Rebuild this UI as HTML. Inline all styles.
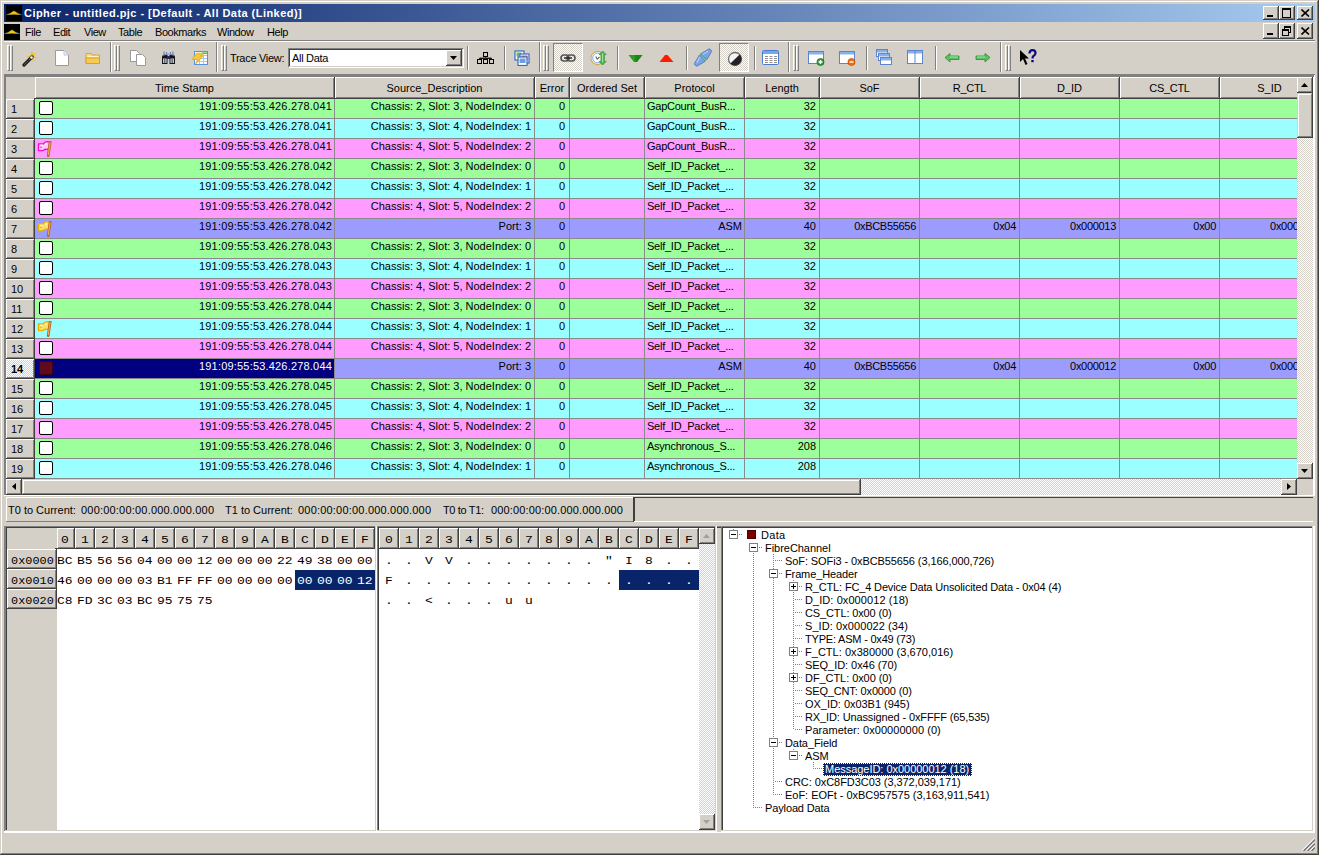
<!DOCTYPE html><html><head><meta charset="utf-8"><style>
html,body{margin:0;padding:0;}
body{width:1319px;height:855px;position:relative;overflow:hidden;background:#d4d0c8;font-family:"Liberation Sans",sans-serif;font-size:11px;color:#000;}
div,svg{position:absolute;}
.t{white-space:nowrap;line-height:13px;}
.m{white-space:nowrap;line-height:13px;font-family:"Liberation Mono",monospace;font-size:11px;transform:scaleX(1.18);transform-origin:0 0;}
.mc{transform-origin:50% 0;}
</style></head><body>
<div style="left:1px;top:1px;width:1316px;height:1px;background:#ffffff;"></div>
<div style="left:1px;top:1px;width:1px;height:852px;background:#ffffff;"></div>
<div style="left:0px;top:854px;width:1319px;height:1px;background:#404040;"></div>
<div style="left:1318px;top:0px;width:1px;height:855px;background:#404040;"></div>
<div style="left:1px;top:853px;width:1317px;height:1px;background:#808080;"></div>
<div style="left:1317px;top:1px;width:1px;height:853px;background:#808080;"></div>
<div style="left:4px;top:4px;width:1311px;height:18px;background:linear-gradient(to right,#0a246a,#a6caf0);"></div>
<svg style="left:6px;top:5px" width="16" height="16"><rect width="16" height="16" fill="#000"/><path d="M0 10 Q4 8.8 6.5 6.8 Q8 5.2 9.5 6.8 Q12 8.8 16 10 Q12 9.6 8 9.6 Q4 9.6 0 10 Z" fill="#f0c410"/><path d="M0.5 9.8 Q3 9 4.5 8.3 M15.5 9.8 Q13 9 11.5 8.3" stroke="#3a70a0" stroke-width="0.9" fill="none"/><path d="M6.5 6.8 Q8 5.2 9.5 6.8" stroke="#90a020" stroke-width="0.6" fill="none"/></svg>
<div class="t" style="left:24px;top:7px;color:#fff;font-weight:bold;letter-spacing:0.46px;">Cipher - untitled.pjc - [Default - All Data (Linked)]</div>
<div style="left:1263px;top:6px;width:16px;height:14px;background:#d4d0c8;"></div>
<div style="left:1263px;top:6px;width:15px;height:1px;background:#ffffff;"></div>
<div style="left:1263px;top:6px;width:1px;height:13px;background:#ffffff;"></div>
<div style="left:1263px;top:19px;width:16px;height:1px;background:#404040;"></div>
<div style="left:1278px;top:6px;width:1px;height:14px;background:#404040;"></div>
<div style="left:1264px;top:18px;width:14px;height:1px;background:#808080;"></div>
<div style="left:1277px;top:7px;width:1px;height:12px;background:#808080;"></div>
<div style="left:1267px;top:15px;width:6px;height:2px;background:#000;"></div>
<div style="left:1279px;top:6px;width:16px;height:14px;background:#d4d0c8;"></div>
<div style="left:1279px;top:6px;width:15px;height:1px;background:#ffffff;"></div>
<div style="left:1279px;top:6px;width:1px;height:13px;background:#ffffff;"></div>
<div style="left:1279px;top:19px;width:16px;height:1px;background:#404040;"></div>
<div style="left:1294px;top:6px;width:1px;height:14px;background:#404040;"></div>
<div style="left:1280px;top:18px;width:14px;height:1px;background:#808080;"></div>
<div style="left:1293px;top:7px;width:1px;height:12px;background:#808080;"></div>
<div style="left:1282px;top:8px;width:7px;height:7px;border:1px solid #000;border-top-width:2px"></div>
<div style="left:1297px;top:6px;width:16px;height:14px;background:#d4d0c8;"></div>
<div style="left:1297px;top:6px;width:15px;height:1px;background:#ffffff;"></div>
<div style="left:1297px;top:6px;width:1px;height:13px;background:#ffffff;"></div>
<div style="left:1297px;top:19px;width:16px;height:1px;background:#404040;"></div>
<div style="left:1312px;top:6px;width:1px;height:14px;background:#404040;"></div>
<div style="left:1298px;top:18px;width:14px;height:1px;background:#808080;"></div>
<div style="left:1311px;top:7px;width:1px;height:12px;background:#808080;"></div>
<svg style="left:1301px;top:9px" width="9" height="8"><path d="M0.5 0.5 L8 7.5 M8 0.5 L0.5 7.5" stroke="#000" stroke-width="1.6"/></svg>
<svg style="left:4px;top:24px" width="16" height="16"><rect width="16" height="16" fill="#000"/><path d="M0 10 Q4 8.8 6.5 6.8 Q8 5.2 9.5 6.8 Q12 8.8 16 10 Q12 9.6 8 9.6 Q4 9.6 0 10 Z" fill="#f0c410"/><path d="M0.5 9.8 Q3 9 4.5 8.3 M15.5 9.8 Q13 9 11.5 8.3" stroke="#3a70a0" stroke-width="0.9" fill="none"/><path d="M6.5 6.8 Q8 5.2 9.5 6.8" stroke="#90a020" stroke-width="0.6" fill="none"/></svg>
<div class="t" style="left:25px;top:26px;letter-spacing:-0.45px;">File</div>
<div class="t" style="left:53px;top:26px;letter-spacing:-0.45px;">Edit</div>
<div class="t" style="left:84px;top:26px;letter-spacing:-0.45px;">View</div>
<div class="t" style="left:118px;top:26px;letter-spacing:-0.45px;">Table</div>
<div class="t" style="left:155px;top:26px;letter-spacing:-0.45px;">Bookmarks</div>
<div class="t" style="left:217px;top:26px;letter-spacing:-0.45px;">Window</div>
<div class="t" style="left:267px;top:26px;letter-spacing:-0.45px;">Help</div>
<div style="left:1263px;top:23px;width:16px;height:16px;background:#d4d0c8;"></div>
<div style="left:1263px;top:23px;width:15px;height:1px;background:#ffffff;"></div>
<div style="left:1263px;top:23px;width:1px;height:15px;background:#ffffff;"></div>
<div style="left:1263px;top:38px;width:16px;height:1px;background:#404040;"></div>
<div style="left:1278px;top:23px;width:1px;height:16px;background:#404040;"></div>
<div style="left:1264px;top:37px;width:14px;height:1px;background:#808080;"></div>
<div style="left:1277px;top:24px;width:1px;height:14px;background:#808080;"></div>
<div style="left:1267px;top:33px;width:6px;height:2px;background:#000;"></div>
<div style="left:1279px;top:23px;width:16px;height:16px;background:#d4d0c8;"></div>
<div style="left:1279px;top:23px;width:15px;height:1px;background:#ffffff;"></div>
<div style="left:1279px;top:23px;width:1px;height:15px;background:#ffffff;"></div>
<div style="left:1279px;top:38px;width:16px;height:1px;background:#404040;"></div>
<div style="left:1294px;top:23px;width:1px;height:16px;background:#404040;"></div>
<div style="left:1280px;top:37px;width:14px;height:1px;background:#808080;"></div>
<div style="left:1293px;top:24px;width:1px;height:14px;background:#808080;"></div>
<div style="left:1284px;top:26px;width:5px;height:4px;border:1px solid #000;border-top-width:2px"></div>
<div style="left:1282px;top:29px;width:5px;height:4px;border:1px solid #000;border-top-width:2px;background:#d4d0c8"></div>
<div style="left:1297px;top:23px;width:16px;height:16px;background:#d4d0c8;"></div>
<div style="left:1297px;top:23px;width:15px;height:1px;background:#ffffff;"></div>
<div style="left:1297px;top:23px;width:1px;height:15px;background:#ffffff;"></div>
<div style="left:1297px;top:38px;width:16px;height:1px;background:#404040;"></div>
<div style="left:1312px;top:23px;width:1px;height:16px;background:#404040;"></div>
<div style="left:1298px;top:37px;width:14px;height:1px;background:#808080;"></div>
<div style="left:1311px;top:24px;width:1px;height:14px;background:#808080;"></div>
<svg style="left:1301px;top:27px" width="9" height="8"><path d="M0.5 0.5 L8 7.5 M8 0.5 L0.5 7.5" stroke="#000" stroke-width="1.6"/></svg>
<div style="left:4px;top:40px;width:1311px;height:1px;background:#808080;"></div>
<div style="left:4px;top:41px;width:1311px;height:1px;background:#ffffff;"></div>
<div style="left:7px;top:45px;width:3px;height:26px;background:#d4d0c8;border-left:1px solid #fff;border-top:1px solid #fff;border-right:1px solid #808080;border-bottom:1px solid #808080;box-sizing:border-box;"></div>
<div style="left:10px;top:45px;width:3px;height:26px;background:#d4d0c8;border-left:1px solid #fff;border-top:1px solid #fff;border-right:1px solid #808080;border-bottom:1px solid #808080;box-sizing:border-box;"></div>
<div style="left:110px;top:42px;width:1px;height:32px;background:#808080;"></div>
<div style="left:111px;top:42px;width:1px;height:32px;background:#ffffff;"></div>
<div style="left:114px;top:45px;width:3px;height:26px;background:#d4d0c8;border-left:1px solid #fff;border-top:1px solid #fff;border-right:1px solid #808080;border-bottom:1px solid #808080;box-sizing:border-box;"></div>
<div style="left:117px;top:45px;width:3px;height:26px;background:#d4d0c8;border-left:1px solid #fff;border-top:1px solid #fff;border-right:1px solid #808080;border-bottom:1px solid #808080;box-sizing:border-box;"></div>
<div style="left:216px;top:42px;width:1px;height:32px;background:#808080;"></div>
<div style="left:217px;top:42px;width:1px;height:32px;background:#ffffff;"></div>
<div style="left:221px;top:45px;width:3px;height:26px;background:#d4d0c8;border-left:1px solid #fff;border-top:1px solid #fff;border-right:1px solid #808080;border-bottom:1px solid #808080;box-sizing:border-box;"></div>
<div style="left:224px;top:45px;width:3px;height:26px;background:#d4d0c8;border-left:1px solid #fff;border-top:1px solid #fff;border-right:1px solid #808080;border-bottom:1px solid #808080;box-sizing:border-box;"></div>
<div style="left:539px;top:42px;width:1px;height:32px;background:#808080;"></div>
<div style="left:540px;top:42px;width:1px;height:32px;background:#ffffff;"></div>
<div style="left:543px;top:45px;width:3px;height:26px;background:#d4d0c8;border-left:1px solid #fff;border-top:1px solid #fff;border-right:1px solid #808080;border-bottom:1px solid #808080;box-sizing:border-box;"></div>
<div style="left:546px;top:45px;width:3px;height:26px;background:#d4d0c8;border-left:1px solid #fff;border-top:1px solid #fff;border-right:1px solid #808080;border-bottom:1px solid #808080;box-sizing:border-box;"></div>
<div style="left:788px;top:42px;width:1px;height:32px;background:#808080;"></div>
<div style="left:789px;top:42px;width:1px;height:32px;background:#ffffff;"></div>
<div style="left:793px;top:45px;width:3px;height:26px;background:#d4d0c8;border-left:1px solid #fff;border-top:1px solid #fff;border-right:1px solid #808080;border-bottom:1px solid #808080;box-sizing:border-box;"></div>
<div style="left:796px;top:45px;width:3px;height:26px;background:#d4d0c8;border-left:1px solid #fff;border-top:1px solid #fff;border-right:1px solid #808080;border-bottom:1px solid #808080;box-sizing:border-box;"></div>
<div style="left:1000px;top:42px;width:1px;height:32px;background:#808080;"></div>
<div style="left:1001px;top:42px;width:1px;height:32px;background:#ffffff;"></div>
<div style="left:1005px;top:45px;width:3px;height:26px;background:#d4d0c8;border-left:1px solid #fff;border-top:1px solid #fff;border-right:1px solid #808080;border-bottom:1px solid #808080;box-sizing:border-box;"></div>
<div style="left:1008px;top:45px;width:3px;height:26px;background:#d4d0c8;border-left:1px solid #fff;border-top:1px solid #fff;border-right:1px solid #808080;border-bottom:1px solid #808080;box-sizing:border-box;"></div>
<div style="left:4px;top:72px;width:1311px;height:2px;background:#d4d0c8;"></div>
<div class="t" style="left:230px;top:52px;letter-spacing:-0.3px;">Trace View:</div>
<div style="left:288px;top:48px;width:176px;height:20px;background:#ffffff;border-top:1px solid #808080;border-left:1px solid #808080;border-bottom:1px solid #fff;border-right:1px solid #fff;box-sizing:border-box;"></div>
<div style="left:289px;top:49px;width:174px;height:1px;background:#404040;"></div>
<div style="left:289px;top:49px;width:1px;height:18px;background:#404040;"></div>
<div style="left:289px;top:66px;width:174px;height:1px;background:#d4d0c8;"></div>
<div style="left:462px;top:49px;width:1px;height:18px;background:#d4d0c8;"></div>
<div class="t" style="left:292px;top:52px;letter-spacing:-0.3px;">All Data</div>
<div style="left:446px;top:50px;width:16px;height:16px;background:#d4d0c8;"></div>
<div style="left:446px;top:50px;width:15px;height:1px;background:#ffffff;"></div>
<div style="left:446px;top:50px;width:1px;height:15px;background:#ffffff;"></div>
<div style="left:446px;top:65px;width:16px;height:1px;background:#404040;"></div>
<div style="left:461px;top:50px;width:1px;height:16px;background:#404040;"></div>
<div style="left:447px;top:64px;width:14px;height:1px;background:#808080;"></div>
<div style="left:460px;top:51px;width:1px;height:14px;background:#808080;"></div>
<svg style="left:450px;top:56px" width="8" height="5"><path d="M0 0 H7 L3.5 4 Z" fill="#000"/></svg>
<div style="left:467px;top:46px;width:1px;height:24px;background:#808080;"></div>
<div style="left:468px;top:46px;width:1px;height:24px;background:#ffffff;"></div>
<div style="left:504px;top:46px;width:1px;height:24px;background:#808080;"></div>
<div style="left:505px;top:46px;width:1px;height:24px;background:#ffffff;"></div>
<div style="left:617px;top:46px;width:1px;height:24px;background:#808080;"></div>
<div style="left:618px;top:46px;width:1px;height:24px;background:#ffffff;"></div>
<div style="left:686px;top:46px;width:1px;height:24px;background:#808080;"></div>
<div style="left:687px;top:46px;width:1px;height:24px;background:#ffffff;"></div>
<div style="left:754px;top:46px;width:1px;height:24px;background:#808080;"></div>
<div style="left:755px;top:46px;width:1px;height:24px;background:#ffffff;"></div>
<div style="left:866px;top:46px;width:1px;height:24px;background:#808080;"></div>
<div style="left:867px;top:46px;width:1px;height:24px;background:#ffffff;"></div>
<div style="left:935px;top:46px;width:1px;height:24px;background:#808080;"></div>
<div style="left:936px;top:46px;width:1px;height:24px;background:#ffffff;"></div>
<div style="left:553px;top:43px;width:30px;height:29px;box-sizing:border-box;border-top:1px solid #808080;border-left:1px solid #808080;border-right:1px solid #fff;border-bottom:1px solid #fff;background:repeating-conic-gradient(#fff 0 25%,#d4d0c8 0 50%) 0 0/2px 2px"></div>
<div style="left:719px;top:43px;width:30px;height:29px;box-sizing:border-box;border-top:1px solid #808080;border-left:1px solid #808080;border-right:1px solid #fff;border-bottom:1px solid #fff;background:repeating-conic-gradient(#fff 0 25%,#d4d0c8 0 50%) 0 0/2px 2px"></div>
<svg style="left:21px;top:49px" width="16" height="18" viewBox="0 0 16 18"><path d="M11 2 L12 5 L15 4 L13 7 L16 9 L12.5 9.5 L13 13 L10.5 10.5 L8 12 L8.5 9 L5.5 7.5 L9 6.5 Z" fill="#f0c020"/><path d="M3 16 L11 8" stroke="#222" stroke-width="3.2" stroke-linecap="round"/><path d="M3.5 15.5 L10.5 8.5" stroke="#888" stroke-width="1" stroke-dasharray="1.5 1.5"/><circle cx="10.5" cy="8.5" r="1.3" fill="#fff"/></svg>
<svg style="left:55px;top:50px" width="14" height="16" viewBox="0 0 14 16"><path d="M0.5 0.5 H9 L13.5 5 V15.5 H0.5 Z" fill="#fff" stroke="#9a9a9a"/><path d="M9 0.5 V5 H13.5" fill="#e8eef8" stroke="#c0c8d8"/></svg>
<svg style="left:85px;top:52px" width="16" height="13" viewBox="0 0 16 13"><path d="M1 1.5 H6 L7 3 H14.5 V11.5 H1 Z" fill="#f8dc80" stroke="#e0a040"/><path d="M1 6 H14.5 V11.5 H1 Z" fill="#f6cc50" stroke="#e09a30"/><path d="M2.5 4.5 H13" stroke="#fff4c0"/></svg>
<svg style="left:130px;top:50px" width="17" height="17" viewBox="0 0 17 17"><path d="M0.5 0.5 H6.5 L9.5 3.5 V11.5 H0.5 Z" fill="#fff" stroke="#9a9a9a"/><path d="M6.5 4.5 H12.5 L15.5 7.5 V15.5 H6.5 Z" fill="#fff" stroke="#9a9a9a"/></svg>
<svg style="left:161px;top:51px" width="15" height="14" viewBox="0 0 15 14"><path d="M1 13 V6 Q1 4 3 3.5 H6.5 V13 Z" fill="#141414"/><path d="M14 13 V6 Q14 4 12 3.5 H8.5 V13 Z" fill="#141414"/><rect x="6" y="5" width="3" height="3" fill="#283048"/><path d="M3 0.5 V3.5 M5.5 1 V4 M9.5 1 V4 M12 0.5 V3.5" stroke="#6a88c0" stroke-width="1.2"/><path d="M2 4.2 Q7.5 2 13 4.2" stroke="#8890d0" stroke-width="1" fill="none"/><rect x="2" y="7.5" width="3.6" height="4.5" fill="#b8c8e8"/><rect x="9.4" y="7.5" width="3.6" height="4.5" fill="#b8c8e8"/><path d="M3.8 8 V12 M11.2 8 V12" stroke="#444" stroke-width="1"/></svg>
<svg style="left:191px;top:50px" width="18" height="16" viewBox="0 0 18 16"><rect x="3.5" y="1.5" width="13" height="13" fill="#fff" stroke="#5a92dc"/><path d="M5 5.5 H16 M5 8.5 H16 M5 11.5 H16 M8.5 4 V14 M12.5 4 V14" stroke="#a4c8f0"/><path d="M11 3.2 H16.5" stroke="#40b040" stroke-width="1.4"/><path d="M1 9 L5.5 3.2 H12.5 L9.5 6.2 H12 L4.5 14 L6.5 9.5 H1.5 Z" fill="#f4c838" stroke="#d8a020" stroke-width="0.7"/></svg>
<svg style="left:476px;top:51px" width="18" height="14" viewBox="0 0 18 14"><rect x="7.5" y="1.5" width="4" height="4" fill="#d4d0c8" stroke="#000"/><rect x="1.5" y="8.5" width="4" height="4" fill="#d4d0c8" stroke="#000"/><rect x="7.5" y="8.5" width="4" height="4" fill="#d4d0c8" stroke="#000"/><rect x="13.5" y="8.5" width="4" height="4" fill="#d4d0c8" stroke="#000"/><path d="M9.5 6 V8 M3.5 8 V7 H15.5 V8" stroke="#333"/></svg>
<svg style="left:514px;top:50px" width="17" height="16" viewBox="0 0 17 16"><rect x="1" y="1" width="9" height="9" fill="#fff" stroke="#3a6ac8" stroke-width="1.2"/><rect x="2.5" y="2.5" width="5" height="4" fill="#60c060"/><rect x="6" y="4" width="9" height="9" fill="#fff" stroke="#3a6ac8" stroke-width="1.2"/><rect x="7.5" y="5.5" width="6" height="5" fill="#e06060"/><rect x="4" y="7" width="9" height="8.5" fill="#fff" stroke="#3a6ac8" stroke-width="1.2"/><rect x="5.5" y="8.5" width="6" height="4.5" fill="#6aa0e0"/></svg>
<svg style="left:560px;top:54px" width="16" height="8" viewBox="0 0 16 8"><rect x="1" y="1" width="8" height="6" rx="3" fill="none" stroke="#555" stroke-width="1.6"/><rect x="7" y="1" width="8" height="6" rx="3" fill="none" stroke="#555" stroke-width="1.6"/><path d="M4 4 H12" stroke="#222" stroke-width="1.4"/></svg>
<svg style="left:590px;top:50px" width="18" height="16" viewBox="0 0 18 16"><circle cx="7.6" cy="8" r="6.6" fill="#fff" stroke="#d8a840" stroke-width="1.1"/><circle cx="7.6" cy="8" r="4.9" fill="#fbfdff" stroke="#6a9ee8" stroke-width="0.9"/><path d="M5.8 6.5 L7.2 9.2 L9.6 6.8" stroke="#606060" stroke-width="1.1" fill="none"/><path d="M12.6 1 L16.2 4.6 H14.3 V11.4 H16.2 L12.6 15 L9 11.4 H10.9 V4.6 H9 Z" fill="#50b850" stroke="#208a30" stroke-width="0.6"/><path d="M12.6 3.5 V12" stroke="#a8eaa8" stroke-width="1"/></svg>
<svg style="left:628px;top:54px" width="15" height="9" viewBox="0 0 15 9"><path d="M0.5 1 H14.5 L9 8 H6 Z" fill="#28a018"/><path d="M7 1 H14.5 L9 8 H7.5 Z" fill="#0a7010" opacity="0.5"/></svg>
<svg style="left:659px;top:54px" width="15" height="9" viewBox="0 0 15 9"><path d="M6 1 H8.5 L14.5 8 H0.5 Z" fill="#ff1a00"/></svg>
<svg style="left:692px;top:47px" width="22" height="22" viewBox="0 0 22 22"><g transform="translate(11 10.5) rotate(-45)"><path d="M-10.5 -1.8 Q-11.5 0 -10.5 1.8 L-1 4.3 L-0.6 -4.3 Z" fill="#7ca4e4" stroke="#4a74c4" stroke-width="0.8"/><path d="M10.5 -1.8 Q11.5 0 10.5 1.8 L1 4.3 L0.6 -4.3 Z" fill="#7ca4e4" stroke="#4a74c4" stroke-width="0.8"/><path d="M-8 -0.8 L-2 -2.5 M8 -0.8 L2 -2.5" stroke="#b0ccf4" stroke-width="1.2"/><path d="M0 -4.2 V4.2" stroke="#50c050" stroke-width="1.4" stroke-dasharray="1.2 0.6"/></g></svg>
<svg style="left:727px;top:51px" width="16" height="16" viewBox="0 0 16 16"><circle cx="8" cy="8" r="6.5" fill="#f4f4f4" stroke="#707070" stroke-width="1.3"/><path d="M12.6 3.4 A6.5 6.5 0 0 1 3.4 12.6 Z" fill="#222"/></svg>
<svg style="left:762px;top:50px" width="17" height="15" viewBox="0 0 17 15"><rect x="0.5" y="0.5" width="16" height="14" rx="1" fill="#fff" stroke="#4a7ad0"/><rect x="1" y="1" width="15" height="3" fill="#7aa4e8"/><path d="M3 6.5 H6 M7.5 6.5 H10.5 M12 6.5 H15 M3 8.5 H6 M7.5 8.5 H10.5 M12 8.5 H15 M3 10.5 H6 M7.5 10.5 H10.5 M12 10.5 H15 M3 12.5 H6 M7.5 12.5 H10.5 M12 12.5 H15" stroke="#909090"/></svg>
<svg style="left:808px;top:50px" width="19" height="16" viewBox="0 0 19 16"><rect x="0.5" y="1.5" width="15" height="12" fill="#fff" stroke="#5a86d0"/><rect x="1" y="2" width="14" height="2.5" fill="#8ab0ec"/><circle cx="12.5" cy="12" r="3.6" fill="#2a9a30" stroke="#1a6a20" stroke-width="0.6"/><path d="M10.5 12 H14.5 M12.5 10 V14" stroke="#fff" stroke-width="1.4"/></svg>
<svg style="left:839px;top:50px" width="19" height="16" viewBox="0 0 19 16"><rect x="0.5" y="1.5" width="15" height="12" fill="#fff" stroke="#5a86d0"/><rect x="1" y="2" width="14" height="2.5" fill="#8ab0ec"/><circle cx="12.5" cy="12" r="3.6" fill="#f06a10" stroke="#c04a00" stroke-width="0.6"/><path d="M10.5 12 H14.5" stroke="#fff" stroke-width="1.4"/></svg>
<svg style="left:876px;top:49px" width="17" height="17" viewBox="0 0 17 17"><rect x="0.5" y="0.5" width="11" height="7" fill="#fff" stroke="#5a86d0"/><rect x="1" y="1" width="10" height="2.5" fill="#8ab0ec"/><rect x="2.5" y="4.5" width="11" height="7" fill="#fff" stroke="#5a86d0"/><rect x="3" y="5" width="10" height="2.5" fill="#8ab0ec"/><rect x="4.5" y="8.5" width="11" height="7" fill="#fff" stroke="#5a86d0"/><rect x="5" y="9" width="10" height="2.5" fill="#8ab0ec"/></svg>
<svg style="left:907px;top:50px" width="16" height="15" viewBox="0 0 16 15"><rect x="0.5" y="0.5" width="15" height="13" fill="#fff" stroke="#5a86d0"/><rect x="1" y="1" width="14" height="2.5" fill="#8ab0ec"/><path d="M8 1 V13.5" stroke="#5a86d0"/></svg>
<svg style="left:944px;top:53px" width="16" height="10" viewBox="0 0 16 10"><path d="M1 4.5 L6 0.5 V3 H15 V6.5 H6 V9 Z" fill="#5cc060" stroke="#2a8a30" stroke-width="0.8"/><path d="M6 4 H14" stroke="#a8e8a8" stroke-width="1"/></svg>
<svg style="left:975px;top:53px" width="16" height="10" viewBox="0 0 16 10"><path d="M15 4.5 L10 0.5 V3 H1 V6.5 H10 V9 Z" fill="#5cc060" stroke="#2a8a30" stroke-width="0.8"/><path d="M2 4 H10" stroke="#a8e8a8" stroke-width="1"/></svg>
<svg style="left:1019px;top:49px" width="19" height="18" viewBox="0 0 19 18"><path d="M1 1 V13 L4 10 L6.5 16 L8.5 15 L6 9.5 H10 Z" fill="#000"/><path d="M10.5 4.5 Q10.5 1.2 13.5 1.2 Q16.5 1.2 16.5 4 Q16.5 6 14.5 7 Q13.5 7.6 13.5 9.5" stroke="#0a0a80" stroke-width="2.2" fill="none"/><rect x="12.3" y="11" width="2.4" height="2.2" fill="#0a0a80"/></svg>
<div style="left:4px;top:74px;width:1311px;height:1px;background:#808080;"></div>
<div style="left:4px;top:74px;width:1px;height:422px;background:#808080;"></div>
<div style="left:5px;top:75px;width:1309px;height:1px;background:#808080;"></div>
<div style="left:5px;top:75px;width:1px;height:420px;background:#808080;"></div>
<div style="left:6px;top:76px;width:1308px;height:1px;background:#808080;"></div>
<div style="left:4px;top:495px;width:1311px;height:1px;background:#ffffff;"></div>
<div style="left:1313px;top:77px;width:1px;height:419px;background:#ffffff;"></div>
<div style="left:1314px;top:75px;width:1px;height:421px;background:#ffffff;"></div>
<div style="left:6px;top:77px;width:1307px;height:418px;background:#d4d0c8;"></div>
<div style="left:6px;top:77px;width:1291px;height:402px;overflow:hidden">
<div style="left:29px;top:0px;width:300px;height:22px;background:#d4d0c8;"></div>
<div style="left:29px;top:0px;width:299px;height:1px;background:#ffffff;"></div>
<div style="left:29px;top:0px;width:1px;height:21px;background:#ffffff;"></div>
<div style="left:328px;top:0px;width:1px;height:22px;background:#404040;"></div>
<div style="left:29px;top:21px;width:300px;height:1px;background:#404040;"></div>
<div style="left:327px;top:1px;width:1px;height:20px;background:#808080;"></div>
<div style="left:30px;top:20px;width:298px;height:1px;background:#808080;"></div>
<div class="t" style="left:29px;width:299px;text-align:center;top:5px;">Time Stamp</div>
<div style="left:329px;top:0px;width:200px;height:22px;background:#d4d0c8;"></div>
<div style="left:329px;top:0px;width:199px;height:1px;background:#ffffff;"></div>
<div style="left:329px;top:0px;width:1px;height:21px;background:#ffffff;"></div>
<div style="left:528px;top:0px;width:1px;height:22px;background:#404040;"></div>
<div style="left:329px;top:21px;width:200px;height:1px;background:#404040;"></div>
<div style="left:527px;top:1px;width:1px;height:20px;background:#808080;"></div>
<div style="left:330px;top:20px;width:198px;height:1px;background:#808080;"></div>
<div class="t" style="left:329px;width:199px;text-align:center;top:5px;">Source_Description</div>
<div style="left:529px;top:0px;width:35px;height:22px;background:#d4d0c8;"></div>
<div style="left:529px;top:0px;width:34px;height:1px;background:#ffffff;"></div>
<div style="left:529px;top:0px;width:1px;height:21px;background:#ffffff;"></div>
<div style="left:563px;top:0px;width:1px;height:22px;background:#404040;"></div>
<div style="left:529px;top:21px;width:35px;height:1px;background:#404040;"></div>
<div style="left:562px;top:1px;width:1px;height:20px;background:#808080;"></div>
<div style="left:530px;top:20px;width:33px;height:1px;background:#808080;"></div>
<div class="t" style="left:529px;width:34px;text-align:center;top:5px;">Error</div>
<div style="left:564px;top:0px;width:75px;height:22px;background:#d4d0c8;"></div>
<div style="left:564px;top:0px;width:74px;height:1px;background:#ffffff;"></div>
<div style="left:564px;top:0px;width:1px;height:21px;background:#ffffff;"></div>
<div style="left:638px;top:0px;width:1px;height:22px;background:#404040;"></div>
<div style="left:564px;top:21px;width:75px;height:1px;background:#404040;"></div>
<div style="left:637px;top:1px;width:1px;height:20px;background:#808080;"></div>
<div style="left:565px;top:20px;width:73px;height:1px;background:#808080;"></div>
<div class="t" style="left:564px;width:74px;text-align:center;top:5px;">Ordered Set</div>
<div style="left:639px;top:0px;width:100px;height:22px;background:#d4d0c8;"></div>
<div style="left:639px;top:0px;width:99px;height:1px;background:#ffffff;"></div>
<div style="left:639px;top:0px;width:1px;height:21px;background:#ffffff;"></div>
<div style="left:738px;top:0px;width:1px;height:22px;background:#404040;"></div>
<div style="left:639px;top:21px;width:100px;height:1px;background:#404040;"></div>
<div style="left:737px;top:1px;width:1px;height:20px;background:#808080;"></div>
<div style="left:640px;top:20px;width:98px;height:1px;background:#808080;"></div>
<div class="t" style="left:639px;width:99px;text-align:center;top:5px;">Protocol</div>
<div style="left:739px;top:0px;width:75px;height:22px;background:#d4d0c8;"></div>
<div style="left:739px;top:0px;width:74px;height:1px;background:#ffffff;"></div>
<div style="left:739px;top:0px;width:1px;height:21px;background:#ffffff;"></div>
<div style="left:813px;top:0px;width:1px;height:22px;background:#404040;"></div>
<div style="left:739px;top:21px;width:75px;height:1px;background:#404040;"></div>
<div style="left:812px;top:1px;width:1px;height:20px;background:#808080;"></div>
<div style="left:740px;top:20px;width:73px;height:1px;background:#808080;"></div>
<div class="t" style="left:739px;width:74px;text-align:center;top:5px;">Length</div>
<div style="left:814px;top:0px;width:100px;height:22px;background:#d4d0c8;"></div>
<div style="left:814px;top:0px;width:99px;height:1px;background:#ffffff;"></div>
<div style="left:814px;top:0px;width:1px;height:21px;background:#ffffff;"></div>
<div style="left:913px;top:0px;width:1px;height:22px;background:#404040;"></div>
<div style="left:814px;top:21px;width:100px;height:1px;background:#404040;"></div>
<div style="left:912px;top:1px;width:1px;height:20px;background:#808080;"></div>
<div style="left:815px;top:20px;width:98px;height:1px;background:#808080;"></div>
<div class="t" style="left:814px;width:99px;text-align:center;top:5px;">SoF</div>
<div style="left:914px;top:0px;width:100px;height:22px;background:#d4d0c8;"></div>
<div style="left:914px;top:0px;width:99px;height:1px;background:#ffffff;"></div>
<div style="left:914px;top:0px;width:1px;height:21px;background:#ffffff;"></div>
<div style="left:1013px;top:0px;width:1px;height:22px;background:#404040;"></div>
<div style="left:914px;top:21px;width:100px;height:1px;background:#404040;"></div>
<div style="left:1012px;top:1px;width:1px;height:20px;background:#808080;"></div>
<div style="left:915px;top:20px;width:98px;height:1px;background:#808080;"></div>
<div class="t" style="left:914px;width:99px;text-align:center;top:5px;letter-spacing:-0.3px;">R_CTL</div>
<div style="left:1014px;top:0px;width:100px;height:22px;background:#d4d0c8;"></div>
<div style="left:1014px;top:0px;width:99px;height:1px;background:#ffffff;"></div>
<div style="left:1014px;top:0px;width:1px;height:21px;background:#ffffff;"></div>
<div style="left:1113px;top:0px;width:1px;height:22px;background:#404040;"></div>
<div style="left:1014px;top:21px;width:100px;height:1px;background:#404040;"></div>
<div style="left:1112px;top:1px;width:1px;height:20px;background:#808080;"></div>
<div style="left:1015px;top:20px;width:98px;height:1px;background:#808080;"></div>
<div class="t" style="left:1014px;width:99px;text-align:center;top:5px;">D_ID</div>
<div style="left:1114px;top:0px;width:100px;height:22px;background:#d4d0c8;"></div>
<div style="left:1114px;top:0px;width:99px;height:1px;background:#ffffff;"></div>
<div style="left:1114px;top:0px;width:1px;height:21px;background:#ffffff;"></div>
<div style="left:1213px;top:0px;width:1px;height:22px;background:#404040;"></div>
<div style="left:1114px;top:21px;width:100px;height:1px;background:#404040;"></div>
<div style="left:1212px;top:1px;width:1px;height:20px;background:#808080;"></div>
<div style="left:1115px;top:20px;width:98px;height:1px;background:#808080;"></div>
<div class="t" style="left:1114px;width:99px;text-align:center;top:5px;letter-spacing:-0.3px;">CS_CTL</div>
<div style="left:1214px;top:0px;width:100px;height:22px;background:#d4d0c8;"></div>
<div style="left:1214px;top:0px;width:99px;height:1px;background:#ffffff;"></div>
<div style="left:1214px;top:0px;width:1px;height:21px;background:#ffffff;"></div>
<div style="left:1313px;top:0px;width:1px;height:22px;background:#404040;"></div>
<div style="left:1214px;top:21px;width:100px;height:1px;background:#404040;"></div>
<div style="left:1312px;top:1px;width:1px;height:20px;background:#808080;"></div>
<div style="left:1215px;top:20px;width:98px;height:1px;background:#808080;"></div>
<div class="t" style="left:1214px;width:99px;text-align:center;top:5px;">S_ID</div>
<div style="left:28px;top:21px;width:1px;height:1px;background:#404040;"></div>
<div style="left:0px;top:22px;width:28px;height:19px;background:#d4d0c8;"></div>
<div style="left:0px;top:22px;width:28px;height:1px;background:#ffffff;"></div>
<div style="left:0px;top:22px;width:1px;height:19px;background:#ffffff;"></div>
<div style="left:27px;top:23px;width:1px;height:18px;background:#808080;"></div>
<div style="left:1px;top:40px;width:27px;height:1px;background:#808080;"></div>
<div style="left:28px;top:22px;width:1px;height:20px;background:#404040;"></div>
<div style="left:0px;top:41px;width:29px;height:1px;background:#404040;"></div>
<div class="t" style="left:5px;top:26px;">1</div>
<div style="left:29px;top:22px;width:1262px;height:19px;background:#9cff9c;"></div>
<div style="left:29px;top:41px;width:1262px;height:1px;background:#8a8a8a;"></div>
<div style="left:328px;top:22px;width:1px;height:20px;background:#8a8a8a;"></div>
<div style="left:528px;top:22px;width:1px;height:20px;background:#8a8a8a;"></div>
<div style="left:563px;top:22px;width:1px;height:20px;background:#8a8a8a;"></div>
<div style="left:638px;top:22px;width:1px;height:20px;background:#8a8a8a;"></div>
<div style="left:738px;top:22px;width:1px;height:20px;background:#8a8a8a;"></div>
<div style="left:813px;top:22px;width:1px;height:20px;background:#8a8a8a;"></div>
<div style="left:913px;top:22px;width:1px;height:20px;background:#8a8a8a;"></div>
<div style="left:1013px;top:22px;width:1px;height:20px;background:#8a8a8a;"></div>
<div style="left:1113px;top:22px;width:1px;height:20px;background:#8a8a8a;"></div>
<div style="left:1213px;top:22px;width:1px;height:20px;background:#8a8a8a;"></div>
<div style="left:1313px;top:22px;width:1px;height:20px;background:#8a8a8a;"></div>
<div class="t" style="left:26px;width:300px;text-align:right;top:23px;letter-spacing:0.19px;">191:09:55:53.426.278.041</div>
<div class="t" style="left:225px;width:300px;text-align:right;top:23px;">Chassis: 2, Slot: 3, NodeIndex: 0</div>
<div class="t" style="left:259px;width:300px;text-align:right;top:23px;">0</div>
<div class="t" style="left:641px;top:23px;letter-spacing:-0.25px;">GapCount_BusR...</div>
<div class="t" style="left:510px;width:300px;text-align:right;top:23px;">32</div>
<div style="left:33px;top:24px;width:14px;height:14px;box-sizing:border-box;border:1px solid #000;border-radius:2px;background:#fff"></div>
<div style="left:0px;top:42px;width:28px;height:19px;background:#d4d0c8;"></div>
<div style="left:0px;top:42px;width:28px;height:1px;background:#ffffff;"></div>
<div style="left:0px;top:42px;width:1px;height:19px;background:#ffffff;"></div>
<div style="left:27px;top:43px;width:1px;height:18px;background:#808080;"></div>
<div style="left:1px;top:60px;width:27px;height:1px;background:#808080;"></div>
<div style="left:28px;top:42px;width:1px;height:20px;background:#404040;"></div>
<div style="left:0px;top:61px;width:29px;height:1px;background:#404040;"></div>
<div class="t" style="left:5px;top:46px;">2</div>
<div style="left:29px;top:42px;width:1262px;height:19px;background:#9cffff;"></div>
<div style="left:29px;top:61px;width:1262px;height:1px;background:#8a8a8a;"></div>
<div style="left:328px;top:42px;width:1px;height:20px;background:#8a8a8a;"></div>
<div style="left:528px;top:42px;width:1px;height:20px;background:#8a8a8a;"></div>
<div style="left:563px;top:42px;width:1px;height:20px;background:#8a8a8a;"></div>
<div style="left:638px;top:42px;width:1px;height:20px;background:#8a8a8a;"></div>
<div style="left:738px;top:42px;width:1px;height:20px;background:#8a8a8a;"></div>
<div style="left:813px;top:42px;width:1px;height:20px;background:#8a8a8a;"></div>
<div style="left:913px;top:42px;width:1px;height:20px;background:#8a8a8a;"></div>
<div style="left:1013px;top:42px;width:1px;height:20px;background:#8a8a8a;"></div>
<div style="left:1113px;top:42px;width:1px;height:20px;background:#8a8a8a;"></div>
<div style="left:1213px;top:42px;width:1px;height:20px;background:#8a8a8a;"></div>
<div style="left:1313px;top:42px;width:1px;height:20px;background:#8a8a8a;"></div>
<div class="t" style="left:26px;width:300px;text-align:right;top:43px;letter-spacing:0.19px;">191:09:55:53.426.278.041</div>
<div class="t" style="left:225px;width:300px;text-align:right;top:43px;">Chassis: 3, Slot: 4, NodeIndex: 1</div>
<div class="t" style="left:259px;width:300px;text-align:right;top:43px;">0</div>
<div class="t" style="left:641px;top:43px;letter-spacing:-0.25px;">GapCount_BusR...</div>
<div class="t" style="left:510px;width:300px;text-align:right;top:43px;">32</div>
<div style="left:33px;top:44px;width:14px;height:14px;box-sizing:border-box;border:1px solid #000;border-radius:2px;background:#fff"></div>
<div style="left:0px;top:62px;width:28px;height:19px;background:#d4d0c8;"></div>
<div style="left:0px;top:62px;width:28px;height:1px;background:#ffffff;"></div>
<div style="left:0px;top:62px;width:1px;height:19px;background:#ffffff;"></div>
<div style="left:27px;top:63px;width:1px;height:18px;background:#808080;"></div>
<div style="left:1px;top:80px;width:27px;height:1px;background:#808080;"></div>
<div style="left:28px;top:62px;width:1px;height:20px;background:#404040;"></div>
<div style="left:0px;top:81px;width:29px;height:1px;background:#404040;"></div>
<div class="t" style="left:5px;top:66px;">3</div>
<div style="left:29px;top:62px;width:1262px;height:19px;background:#ff9cff;"></div>
<div style="left:29px;top:81px;width:1262px;height:1px;background:#8a8a8a;"></div>
<div style="left:328px;top:62px;width:1px;height:20px;background:#8a8a8a;"></div>
<div style="left:528px;top:62px;width:1px;height:20px;background:#8a8a8a;"></div>
<div style="left:563px;top:62px;width:1px;height:20px;background:#8a8a8a;"></div>
<div style="left:638px;top:62px;width:1px;height:20px;background:#8a8a8a;"></div>
<div style="left:738px;top:62px;width:1px;height:20px;background:#8a8a8a;"></div>
<div style="left:813px;top:62px;width:1px;height:20px;background:#8a8a8a;"></div>
<div style="left:913px;top:62px;width:1px;height:20px;background:#8a8a8a;"></div>
<div style="left:1013px;top:62px;width:1px;height:20px;background:#8a8a8a;"></div>
<div style="left:1113px;top:62px;width:1px;height:20px;background:#8a8a8a;"></div>
<div style="left:1213px;top:62px;width:1px;height:20px;background:#8a8a8a;"></div>
<div style="left:1313px;top:62px;width:1px;height:20px;background:#8a8a8a;"></div>
<div class="t" style="left:26px;width:300px;text-align:right;top:63px;letter-spacing:0.19px;">191:09:55:53.426.278.041</div>
<div class="t" style="left:225px;width:300px;text-align:right;top:63px;">Chassis: 4, Slot: 5, NodeIndex: 2</div>
<div class="t" style="left:259px;width:300px;text-align:right;top:63px;">0</div>
<div class="t" style="left:641px;top:63px;letter-spacing:-0.25px;">GapCount_BusR...</div>
<div class="t" style="left:510px;width:300px;text-align:right;top:63px;">32</div>
<div style="left:31px;top:64px;width:16px;height:16px"><svg width="16" height="16" viewBox="0 0 16 16"><path d="M1.5 2.8 H6.5 Q8 0.6 10.5 0.6 L12.6 1.2 L11.8 8 Q9.5 8.6 8 8.2 Q7 9.6 5.5 9.6 H1.5 Z" fill="#ffc8f8" stroke="#f010c8" stroke-width="1.3"/><path d="M3 4.5 H6 M8 3 L10 2.5" stroke="#ffffff" stroke-width="1.6"/><path d="M3 6 L5 6.5" stroke="#f060e0" stroke-width="1.5"/><path d="M13.2 0.8 L11.2 14.6" stroke="#b86820" stroke-width="2.8" stroke-linecap="round"/><path d="M13.1 1.2 L11.3 14" stroke="#f0a860" stroke-width="1.1"/></svg></div>
<div style="left:0px;top:82px;width:28px;height:19px;background:#d4d0c8;"></div>
<div style="left:0px;top:82px;width:28px;height:1px;background:#ffffff;"></div>
<div style="left:0px;top:82px;width:1px;height:19px;background:#ffffff;"></div>
<div style="left:27px;top:83px;width:1px;height:18px;background:#808080;"></div>
<div style="left:1px;top:100px;width:27px;height:1px;background:#808080;"></div>
<div style="left:28px;top:82px;width:1px;height:20px;background:#404040;"></div>
<div style="left:0px;top:101px;width:29px;height:1px;background:#404040;"></div>
<div class="t" style="left:5px;top:86px;">4</div>
<div style="left:29px;top:82px;width:1262px;height:19px;background:#9cff9c;"></div>
<div style="left:29px;top:101px;width:1262px;height:1px;background:#8a8a8a;"></div>
<div style="left:328px;top:82px;width:1px;height:20px;background:#8a8a8a;"></div>
<div style="left:528px;top:82px;width:1px;height:20px;background:#8a8a8a;"></div>
<div style="left:563px;top:82px;width:1px;height:20px;background:#8a8a8a;"></div>
<div style="left:638px;top:82px;width:1px;height:20px;background:#8a8a8a;"></div>
<div style="left:738px;top:82px;width:1px;height:20px;background:#8a8a8a;"></div>
<div style="left:813px;top:82px;width:1px;height:20px;background:#8a8a8a;"></div>
<div style="left:913px;top:82px;width:1px;height:20px;background:#8a8a8a;"></div>
<div style="left:1013px;top:82px;width:1px;height:20px;background:#8a8a8a;"></div>
<div style="left:1113px;top:82px;width:1px;height:20px;background:#8a8a8a;"></div>
<div style="left:1213px;top:82px;width:1px;height:20px;background:#8a8a8a;"></div>
<div style="left:1313px;top:82px;width:1px;height:20px;background:#8a8a8a;"></div>
<div class="t" style="left:26px;width:300px;text-align:right;top:83px;letter-spacing:0.19px;">191:09:55:53.426.278.042</div>
<div class="t" style="left:225px;width:300px;text-align:right;top:83px;">Chassis: 2, Slot: 3, NodeIndex: 0</div>
<div class="t" style="left:259px;width:300px;text-align:right;top:83px;">0</div>
<div class="t" style="left:641px;top:83px;letter-spacing:-0.25px;">Self_ID_Packet_...</div>
<div class="t" style="left:510px;width:300px;text-align:right;top:83px;">32</div>
<div style="left:33px;top:84px;width:14px;height:14px;box-sizing:border-box;border:1px solid #000;border-radius:2px;background:#fff"></div>
<div style="left:0px;top:102px;width:28px;height:19px;background:#d4d0c8;"></div>
<div style="left:0px;top:102px;width:28px;height:1px;background:#ffffff;"></div>
<div style="left:0px;top:102px;width:1px;height:19px;background:#ffffff;"></div>
<div style="left:27px;top:103px;width:1px;height:18px;background:#808080;"></div>
<div style="left:1px;top:120px;width:27px;height:1px;background:#808080;"></div>
<div style="left:28px;top:102px;width:1px;height:20px;background:#404040;"></div>
<div style="left:0px;top:121px;width:29px;height:1px;background:#404040;"></div>
<div class="t" style="left:5px;top:106px;">5</div>
<div style="left:29px;top:102px;width:1262px;height:19px;background:#9cffff;"></div>
<div style="left:29px;top:121px;width:1262px;height:1px;background:#8a8a8a;"></div>
<div style="left:328px;top:102px;width:1px;height:20px;background:#8a8a8a;"></div>
<div style="left:528px;top:102px;width:1px;height:20px;background:#8a8a8a;"></div>
<div style="left:563px;top:102px;width:1px;height:20px;background:#8a8a8a;"></div>
<div style="left:638px;top:102px;width:1px;height:20px;background:#8a8a8a;"></div>
<div style="left:738px;top:102px;width:1px;height:20px;background:#8a8a8a;"></div>
<div style="left:813px;top:102px;width:1px;height:20px;background:#8a8a8a;"></div>
<div style="left:913px;top:102px;width:1px;height:20px;background:#8a8a8a;"></div>
<div style="left:1013px;top:102px;width:1px;height:20px;background:#8a8a8a;"></div>
<div style="left:1113px;top:102px;width:1px;height:20px;background:#8a8a8a;"></div>
<div style="left:1213px;top:102px;width:1px;height:20px;background:#8a8a8a;"></div>
<div style="left:1313px;top:102px;width:1px;height:20px;background:#8a8a8a;"></div>
<div class="t" style="left:26px;width:300px;text-align:right;top:103px;letter-spacing:0.19px;">191:09:55:53.426.278.042</div>
<div class="t" style="left:225px;width:300px;text-align:right;top:103px;">Chassis: 3, Slot: 4, NodeIndex: 1</div>
<div class="t" style="left:259px;width:300px;text-align:right;top:103px;">0</div>
<div class="t" style="left:641px;top:103px;letter-spacing:-0.25px;">Self_ID_Packet_...</div>
<div class="t" style="left:510px;width:300px;text-align:right;top:103px;">32</div>
<div style="left:33px;top:104px;width:14px;height:14px;box-sizing:border-box;border:1px solid #000;border-radius:2px;background:#fff"></div>
<div style="left:0px;top:122px;width:28px;height:19px;background:#d4d0c8;"></div>
<div style="left:0px;top:122px;width:28px;height:1px;background:#ffffff;"></div>
<div style="left:0px;top:122px;width:1px;height:19px;background:#ffffff;"></div>
<div style="left:27px;top:123px;width:1px;height:18px;background:#808080;"></div>
<div style="left:1px;top:140px;width:27px;height:1px;background:#808080;"></div>
<div style="left:28px;top:122px;width:1px;height:20px;background:#404040;"></div>
<div style="left:0px;top:141px;width:29px;height:1px;background:#404040;"></div>
<div class="t" style="left:5px;top:126px;">6</div>
<div style="left:29px;top:122px;width:1262px;height:19px;background:#ff9cff;"></div>
<div style="left:29px;top:141px;width:1262px;height:1px;background:#8a8a8a;"></div>
<div style="left:328px;top:122px;width:1px;height:20px;background:#8a8a8a;"></div>
<div style="left:528px;top:122px;width:1px;height:20px;background:#8a8a8a;"></div>
<div style="left:563px;top:122px;width:1px;height:20px;background:#8a8a8a;"></div>
<div style="left:638px;top:122px;width:1px;height:20px;background:#8a8a8a;"></div>
<div style="left:738px;top:122px;width:1px;height:20px;background:#8a8a8a;"></div>
<div style="left:813px;top:122px;width:1px;height:20px;background:#8a8a8a;"></div>
<div style="left:913px;top:122px;width:1px;height:20px;background:#8a8a8a;"></div>
<div style="left:1013px;top:122px;width:1px;height:20px;background:#8a8a8a;"></div>
<div style="left:1113px;top:122px;width:1px;height:20px;background:#8a8a8a;"></div>
<div style="left:1213px;top:122px;width:1px;height:20px;background:#8a8a8a;"></div>
<div style="left:1313px;top:122px;width:1px;height:20px;background:#8a8a8a;"></div>
<div class="t" style="left:26px;width:300px;text-align:right;top:123px;letter-spacing:0.19px;">191:09:55:53.426.278.042</div>
<div class="t" style="left:225px;width:300px;text-align:right;top:123px;">Chassis: 4, Slot: 5, NodeIndex: 2</div>
<div class="t" style="left:259px;width:300px;text-align:right;top:123px;">0</div>
<div class="t" style="left:641px;top:123px;letter-spacing:-0.25px;">Self_ID_Packet_...</div>
<div class="t" style="left:510px;width:300px;text-align:right;top:123px;">32</div>
<div style="left:33px;top:124px;width:14px;height:14px;box-sizing:border-box;border:1px solid #000;border-radius:2px;background:#fff"></div>
<div style="left:0px;top:142px;width:28px;height:19px;background:#d4d0c8;"></div>
<div style="left:0px;top:142px;width:28px;height:1px;background:#ffffff;"></div>
<div style="left:0px;top:142px;width:1px;height:19px;background:#ffffff;"></div>
<div style="left:27px;top:143px;width:1px;height:18px;background:#808080;"></div>
<div style="left:1px;top:160px;width:27px;height:1px;background:#808080;"></div>
<div style="left:28px;top:142px;width:1px;height:20px;background:#404040;"></div>
<div style="left:0px;top:161px;width:29px;height:1px;background:#404040;"></div>
<div class="t" style="left:5px;top:146px;">7</div>
<div style="left:29px;top:142px;width:1262px;height:19px;background:#9c9cff;"></div>
<div style="left:29px;top:161px;width:1262px;height:1px;background:#8a8a8a;"></div>
<div style="left:328px;top:142px;width:1px;height:20px;background:#8a8a8a;"></div>
<div style="left:528px;top:142px;width:1px;height:20px;background:#8a8a8a;"></div>
<div style="left:563px;top:142px;width:1px;height:20px;background:#8a8a8a;"></div>
<div style="left:638px;top:142px;width:1px;height:20px;background:#8a8a8a;"></div>
<div style="left:738px;top:142px;width:1px;height:20px;background:#8a8a8a;"></div>
<div style="left:813px;top:142px;width:1px;height:20px;background:#8a8a8a;"></div>
<div style="left:913px;top:142px;width:1px;height:20px;background:#8a8a8a;"></div>
<div style="left:1013px;top:142px;width:1px;height:20px;background:#8a8a8a;"></div>
<div style="left:1113px;top:142px;width:1px;height:20px;background:#8a8a8a;"></div>
<div style="left:1213px;top:142px;width:1px;height:20px;background:#8a8a8a;"></div>
<div style="left:1313px;top:142px;width:1px;height:20px;background:#8a8a8a;"></div>
<div class="t" style="left:26px;width:300px;text-align:right;top:143px;letter-spacing:0.19px;">191:09:55:53.426.278.042</div>
<div class="t" style="left:225px;width:300px;text-align:right;top:143px;">Port: 3</div>
<div class="t" style="left:259px;width:300px;text-align:right;top:143px;">0</div>
<div class="t" style="left:436px;width:300px;text-align:right;top:143px;">ASM</div>
<div class="t" style="left:510px;width:300px;text-align:right;top:143px;">40</div>
<div class="t" style="left:610px;width:300px;text-align:right;top:143px;letter-spacing:-0.3px;">0xBCB55656</div>
<div class="t" style="left:710px;width:300px;text-align:right;top:143px;letter-spacing:-0.3px;">0x04</div>
<div class="t" style="left:810px;width:300px;text-align:right;top:143px;letter-spacing:-0.3px;">0x000013</div>
<div class="t" style="left:910px;width:300px;text-align:right;top:143px;letter-spacing:-0.3px;">0x00</div>
<div class="t" style="left:1010px;width:300px;text-align:right;top:143px;letter-spacing:-0.3px;">0x000022</div>
<div style="left:31px;top:144px;width:16px;height:16px"><svg width="16" height="16" viewBox="0 0 16 16"><path d="M1.5 2.8 H6.5 Q8 0.6 10.5 0.6 L12.6 1.2 L11.8 8 Q9.5 8.6 8 8.2 Q7 9.6 5.5 9.6 H1.5 Z" fill="#f8e070" stroke="#e8b000" stroke-width="1.3"/><path d="M3 4.5 H6 M8 3 L10 2.5" stroke="#fff8d0" stroke-width="1.6"/><path d="M3 6 L5 6.5" stroke="#e8c020" stroke-width="1.5"/><path d="M13.2 0.8 L11.2 14.6" stroke="#b86820" stroke-width="2.8" stroke-linecap="round"/><path d="M13.1 1.2 L11.3 14" stroke="#f0a860" stroke-width="1.1"/></svg></div>
<div style="left:0px;top:162px;width:28px;height:19px;background:#d4d0c8;"></div>
<div style="left:0px;top:162px;width:28px;height:1px;background:#ffffff;"></div>
<div style="left:0px;top:162px;width:1px;height:19px;background:#ffffff;"></div>
<div style="left:27px;top:163px;width:1px;height:18px;background:#808080;"></div>
<div style="left:1px;top:180px;width:27px;height:1px;background:#808080;"></div>
<div style="left:28px;top:162px;width:1px;height:20px;background:#404040;"></div>
<div style="left:0px;top:181px;width:29px;height:1px;background:#404040;"></div>
<div class="t" style="left:5px;top:166px;">8</div>
<div style="left:29px;top:162px;width:1262px;height:19px;background:#9cff9c;"></div>
<div style="left:29px;top:181px;width:1262px;height:1px;background:#8a8a8a;"></div>
<div style="left:328px;top:162px;width:1px;height:20px;background:#8a8a8a;"></div>
<div style="left:528px;top:162px;width:1px;height:20px;background:#8a8a8a;"></div>
<div style="left:563px;top:162px;width:1px;height:20px;background:#8a8a8a;"></div>
<div style="left:638px;top:162px;width:1px;height:20px;background:#8a8a8a;"></div>
<div style="left:738px;top:162px;width:1px;height:20px;background:#8a8a8a;"></div>
<div style="left:813px;top:162px;width:1px;height:20px;background:#8a8a8a;"></div>
<div style="left:913px;top:162px;width:1px;height:20px;background:#8a8a8a;"></div>
<div style="left:1013px;top:162px;width:1px;height:20px;background:#8a8a8a;"></div>
<div style="left:1113px;top:162px;width:1px;height:20px;background:#8a8a8a;"></div>
<div style="left:1213px;top:162px;width:1px;height:20px;background:#8a8a8a;"></div>
<div style="left:1313px;top:162px;width:1px;height:20px;background:#8a8a8a;"></div>
<div class="t" style="left:26px;width:300px;text-align:right;top:163px;letter-spacing:0.19px;">191:09:55:53.426.278.043</div>
<div class="t" style="left:225px;width:300px;text-align:right;top:163px;">Chassis: 2, Slot: 3, NodeIndex: 0</div>
<div class="t" style="left:259px;width:300px;text-align:right;top:163px;">0</div>
<div class="t" style="left:641px;top:163px;letter-spacing:-0.25px;">Self_ID_Packet_...</div>
<div class="t" style="left:510px;width:300px;text-align:right;top:163px;">32</div>
<div style="left:33px;top:164px;width:14px;height:14px;box-sizing:border-box;border:1px solid #000;border-radius:2px;background:#fff"></div>
<div style="left:0px;top:182px;width:28px;height:19px;background:#d4d0c8;"></div>
<div style="left:0px;top:182px;width:28px;height:1px;background:#ffffff;"></div>
<div style="left:0px;top:182px;width:1px;height:19px;background:#ffffff;"></div>
<div style="left:27px;top:183px;width:1px;height:18px;background:#808080;"></div>
<div style="left:1px;top:200px;width:27px;height:1px;background:#808080;"></div>
<div style="left:28px;top:182px;width:1px;height:20px;background:#404040;"></div>
<div style="left:0px;top:201px;width:29px;height:1px;background:#404040;"></div>
<div class="t" style="left:5px;top:186px;">9</div>
<div style="left:29px;top:182px;width:1262px;height:19px;background:#9cffff;"></div>
<div style="left:29px;top:201px;width:1262px;height:1px;background:#8a8a8a;"></div>
<div style="left:328px;top:182px;width:1px;height:20px;background:#8a8a8a;"></div>
<div style="left:528px;top:182px;width:1px;height:20px;background:#8a8a8a;"></div>
<div style="left:563px;top:182px;width:1px;height:20px;background:#8a8a8a;"></div>
<div style="left:638px;top:182px;width:1px;height:20px;background:#8a8a8a;"></div>
<div style="left:738px;top:182px;width:1px;height:20px;background:#8a8a8a;"></div>
<div style="left:813px;top:182px;width:1px;height:20px;background:#8a8a8a;"></div>
<div style="left:913px;top:182px;width:1px;height:20px;background:#8a8a8a;"></div>
<div style="left:1013px;top:182px;width:1px;height:20px;background:#8a8a8a;"></div>
<div style="left:1113px;top:182px;width:1px;height:20px;background:#8a8a8a;"></div>
<div style="left:1213px;top:182px;width:1px;height:20px;background:#8a8a8a;"></div>
<div style="left:1313px;top:182px;width:1px;height:20px;background:#8a8a8a;"></div>
<div class="t" style="left:26px;width:300px;text-align:right;top:183px;letter-spacing:0.19px;">191:09:55:53.426.278.043</div>
<div class="t" style="left:225px;width:300px;text-align:right;top:183px;">Chassis: 3, Slot: 4, NodeIndex: 1</div>
<div class="t" style="left:259px;width:300px;text-align:right;top:183px;">0</div>
<div class="t" style="left:641px;top:183px;letter-spacing:-0.25px;">Self_ID_Packet_...</div>
<div class="t" style="left:510px;width:300px;text-align:right;top:183px;">32</div>
<div style="left:33px;top:184px;width:14px;height:14px;box-sizing:border-box;border:1px solid #000;border-radius:2px;background:#fff"></div>
<div style="left:0px;top:202px;width:28px;height:19px;background:#d4d0c8;"></div>
<div style="left:0px;top:202px;width:28px;height:1px;background:#ffffff;"></div>
<div style="left:0px;top:202px;width:1px;height:19px;background:#ffffff;"></div>
<div style="left:27px;top:203px;width:1px;height:18px;background:#808080;"></div>
<div style="left:1px;top:220px;width:27px;height:1px;background:#808080;"></div>
<div style="left:28px;top:202px;width:1px;height:20px;background:#404040;"></div>
<div style="left:0px;top:221px;width:29px;height:1px;background:#404040;"></div>
<div class="t" style="left:5px;top:206px;">10</div>
<div style="left:29px;top:202px;width:1262px;height:19px;background:#ff9cff;"></div>
<div style="left:29px;top:221px;width:1262px;height:1px;background:#8a8a8a;"></div>
<div style="left:328px;top:202px;width:1px;height:20px;background:#8a8a8a;"></div>
<div style="left:528px;top:202px;width:1px;height:20px;background:#8a8a8a;"></div>
<div style="left:563px;top:202px;width:1px;height:20px;background:#8a8a8a;"></div>
<div style="left:638px;top:202px;width:1px;height:20px;background:#8a8a8a;"></div>
<div style="left:738px;top:202px;width:1px;height:20px;background:#8a8a8a;"></div>
<div style="left:813px;top:202px;width:1px;height:20px;background:#8a8a8a;"></div>
<div style="left:913px;top:202px;width:1px;height:20px;background:#8a8a8a;"></div>
<div style="left:1013px;top:202px;width:1px;height:20px;background:#8a8a8a;"></div>
<div style="left:1113px;top:202px;width:1px;height:20px;background:#8a8a8a;"></div>
<div style="left:1213px;top:202px;width:1px;height:20px;background:#8a8a8a;"></div>
<div style="left:1313px;top:202px;width:1px;height:20px;background:#8a8a8a;"></div>
<div class="t" style="left:26px;width:300px;text-align:right;top:203px;letter-spacing:0.19px;">191:09:55:53.426.278.043</div>
<div class="t" style="left:225px;width:300px;text-align:right;top:203px;">Chassis: 4, Slot: 5, NodeIndex: 2</div>
<div class="t" style="left:259px;width:300px;text-align:right;top:203px;">0</div>
<div class="t" style="left:641px;top:203px;letter-spacing:-0.25px;">Self_ID_Packet_...</div>
<div class="t" style="left:510px;width:300px;text-align:right;top:203px;">32</div>
<div style="left:33px;top:204px;width:14px;height:14px;box-sizing:border-box;border:1px solid #000;border-radius:2px;background:#fff"></div>
<div style="left:0px;top:222px;width:28px;height:19px;background:#d4d0c8;"></div>
<div style="left:0px;top:222px;width:28px;height:1px;background:#ffffff;"></div>
<div style="left:0px;top:222px;width:1px;height:19px;background:#ffffff;"></div>
<div style="left:27px;top:223px;width:1px;height:18px;background:#808080;"></div>
<div style="left:1px;top:240px;width:27px;height:1px;background:#808080;"></div>
<div style="left:28px;top:222px;width:1px;height:20px;background:#404040;"></div>
<div style="left:0px;top:241px;width:29px;height:1px;background:#404040;"></div>
<div class="t" style="left:5px;top:226px;">11</div>
<div style="left:29px;top:222px;width:1262px;height:19px;background:#9cff9c;"></div>
<div style="left:29px;top:241px;width:1262px;height:1px;background:#8a8a8a;"></div>
<div style="left:328px;top:222px;width:1px;height:20px;background:#8a8a8a;"></div>
<div style="left:528px;top:222px;width:1px;height:20px;background:#8a8a8a;"></div>
<div style="left:563px;top:222px;width:1px;height:20px;background:#8a8a8a;"></div>
<div style="left:638px;top:222px;width:1px;height:20px;background:#8a8a8a;"></div>
<div style="left:738px;top:222px;width:1px;height:20px;background:#8a8a8a;"></div>
<div style="left:813px;top:222px;width:1px;height:20px;background:#8a8a8a;"></div>
<div style="left:913px;top:222px;width:1px;height:20px;background:#8a8a8a;"></div>
<div style="left:1013px;top:222px;width:1px;height:20px;background:#8a8a8a;"></div>
<div style="left:1113px;top:222px;width:1px;height:20px;background:#8a8a8a;"></div>
<div style="left:1213px;top:222px;width:1px;height:20px;background:#8a8a8a;"></div>
<div style="left:1313px;top:222px;width:1px;height:20px;background:#8a8a8a;"></div>
<div class="t" style="left:26px;width:300px;text-align:right;top:223px;letter-spacing:0.19px;">191:09:55:53.426.278.044</div>
<div class="t" style="left:225px;width:300px;text-align:right;top:223px;">Chassis: 2, Slot: 3, NodeIndex: 0</div>
<div class="t" style="left:259px;width:300px;text-align:right;top:223px;">0</div>
<div class="t" style="left:641px;top:223px;letter-spacing:-0.25px;">Self_ID_Packet_...</div>
<div class="t" style="left:510px;width:300px;text-align:right;top:223px;">32</div>
<div style="left:33px;top:224px;width:14px;height:14px;box-sizing:border-box;border:1px solid #000;border-radius:2px;background:#fff"></div>
<div style="left:0px;top:242px;width:28px;height:19px;background:#d4d0c8;"></div>
<div style="left:0px;top:242px;width:28px;height:1px;background:#ffffff;"></div>
<div style="left:0px;top:242px;width:1px;height:19px;background:#ffffff;"></div>
<div style="left:27px;top:243px;width:1px;height:18px;background:#808080;"></div>
<div style="left:1px;top:260px;width:27px;height:1px;background:#808080;"></div>
<div style="left:28px;top:242px;width:1px;height:20px;background:#404040;"></div>
<div style="left:0px;top:261px;width:29px;height:1px;background:#404040;"></div>
<div class="t" style="left:5px;top:246px;">12</div>
<div style="left:29px;top:242px;width:1262px;height:19px;background:#9cffff;"></div>
<div style="left:29px;top:261px;width:1262px;height:1px;background:#8a8a8a;"></div>
<div style="left:328px;top:242px;width:1px;height:20px;background:#8a8a8a;"></div>
<div style="left:528px;top:242px;width:1px;height:20px;background:#8a8a8a;"></div>
<div style="left:563px;top:242px;width:1px;height:20px;background:#8a8a8a;"></div>
<div style="left:638px;top:242px;width:1px;height:20px;background:#8a8a8a;"></div>
<div style="left:738px;top:242px;width:1px;height:20px;background:#8a8a8a;"></div>
<div style="left:813px;top:242px;width:1px;height:20px;background:#8a8a8a;"></div>
<div style="left:913px;top:242px;width:1px;height:20px;background:#8a8a8a;"></div>
<div style="left:1013px;top:242px;width:1px;height:20px;background:#8a8a8a;"></div>
<div style="left:1113px;top:242px;width:1px;height:20px;background:#8a8a8a;"></div>
<div style="left:1213px;top:242px;width:1px;height:20px;background:#8a8a8a;"></div>
<div style="left:1313px;top:242px;width:1px;height:20px;background:#8a8a8a;"></div>
<div class="t" style="left:26px;width:300px;text-align:right;top:243px;letter-spacing:0.19px;">191:09:55:53.426.278.044</div>
<div class="t" style="left:225px;width:300px;text-align:right;top:243px;">Chassis: 3, Slot: 4, NodeIndex: 1</div>
<div class="t" style="left:259px;width:300px;text-align:right;top:243px;">0</div>
<div class="t" style="left:641px;top:243px;letter-spacing:-0.25px;">Self_ID_Packet_...</div>
<div class="t" style="left:510px;width:300px;text-align:right;top:243px;">32</div>
<div style="left:31px;top:244px;width:16px;height:16px"><svg width="16" height="16" viewBox="0 0 16 16"><path d="M1.5 2.8 H6.5 Q8 0.6 10.5 0.6 L12.6 1.2 L11.8 8 Q9.5 8.6 8 8.2 Q7 9.6 5.5 9.6 H1.5 Z" fill="#f8e070" stroke="#e8b000" stroke-width="1.3"/><path d="M3 4.5 H6 M8 3 L10 2.5" stroke="#fff8d0" stroke-width="1.6"/><path d="M3 6 L5 6.5" stroke="#e8c020" stroke-width="1.5"/><path d="M13.2 0.8 L11.2 14.6" stroke="#b86820" stroke-width="2.8" stroke-linecap="round"/><path d="M13.1 1.2 L11.3 14" stroke="#f0a860" stroke-width="1.1"/></svg></div>
<div style="left:0px;top:262px;width:28px;height:19px;background:#d4d0c8;"></div>
<div style="left:0px;top:262px;width:28px;height:1px;background:#ffffff;"></div>
<div style="left:0px;top:262px;width:1px;height:19px;background:#ffffff;"></div>
<div style="left:27px;top:263px;width:1px;height:18px;background:#808080;"></div>
<div style="left:1px;top:280px;width:27px;height:1px;background:#808080;"></div>
<div style="left:28px;top:262px;width:1px;height:20px;background:#404040;"></div>
<div style="left:0px;top:281px;width:29px;height:1px;background:#404040;"></div>
<div class="t" style="left:5px;top:266px;">13</div>
<div style="left:29px;top:262px;width:1262px;height:19px;background:#ff9cff;"></div>
<div style="left:29px;top:281px;width:1262px;height:1px;background:#8a8a8a;"></div>
<div style="left:328px;top:262px;width:1px;height:20px;background:#8a8a8a;"></div>
<div style="left:528px;top:262px;width:1px;height:20px;background:#8a8a8a;"></div>
<div style="left:563px;top:262px;width:1px;height:20px;background:#8a8a8a;"></div>
<div style="left:638px;top:262px;width:1px;height:20px;background:#8a8a8a;"></div>
<div style="left:738px;top:262px;width:1px;height:20px;background:#8a8a8a;"></div>
<div style="left:813px;top:262px;width:1px;height:20px;background:#8a8a8a;"></div>
<div style="left:913px;top:262px;width:1px;height:20px;background:#8a8a8a;"></div>
<div style="left:1013px;top:262px;width:1px;height:20px;background:#8a8a8a;"></div>
<div style="left:1113px;top:262px;width:1px;height:20px;background:#8a8a8a;"></div>
<div style="left:1213px;top:262px;width:1px;height:20px;background:#8a8a8a;"></div>
<div style="left:1313px;top:262px;width:1px;height:20px;background:#8a8a8a;"></div>
<div class="t" style="left:26px;width:300px;text-align:right;top:263px;letter-spacing:0.19px;">191:09:55:53.426.278.044</div>
<div class="t" style="left:225px;width:300px;text-align:right;top:263px;">Chassis: 4, Slot: 5, NodeIndex: 2</div>
<div class="t" style="left:259px;width:300px;text-align:right;top:263px;">0</div>
<div class="t" style="left:641px;top:263px;letter-spacing:-0.25px;">Self_ID_Packet_...</div>
<div class="t" style="left:510px;width:300px;text-align:right;top:263px;">32</div>
<div style="left:33px;top:264px;width:14px;height:14px;box-sizing:border-box;border:1px solid #000;border-radius:2px;background:#fff"></div>
<div style="left:0px;top:282px;width:28px;height:19px;background:#d4d0c8;"></div>
<div style="left:1px;top:283px;width:26px;height:17px;background:repeating-conic-gradient(#fff 0 25%,#d4d0c8 0 50%) 0 0/2px 2px;"></div>
<div style="left:0px;top:282px;width:28px;height:1px;background:#ffffff;"></div>
<div style="left:0px;top:282px;width:1px;height:19px;background:#ffffff;"></div>
<div style="left:27px;top:283px;width:1px;height:18px;background:#808080;"></div>
<div style="left:1px;top:300px;width:27px;height:1px;background:#808080;"></div>
<div style="left:28px;top:282px;width:1px;height:20px;background:#404040;"></div>
<div style="left:0px;top:301px;width:29px;height:1px;background:#404040;"></div>
<div class="t" style="left:5px;top:286px;font-weight:bold;">14</div>
<div style="left:29px;top:282px;width:1262px;height:19px;background:#9c9cff;"></div>
<div style="left:29px;top:301px;width:1262px;height:1px;background:#8a8a8a;"></div>
<div style="left:29px;top:282px;width:299px;height:19px;background:#000080;"></div>
<div style="left:328px;top:282px;width:1px;height:20px;background:#8a8a8a;"></div>
<div style="left:528px;top:282px;width:1px;height:20px;background:#8a8a8a;"></div>
<div style="left:563px;top:282px;width:1px;height:20px;background:#8a8a8a;"></div>
<div style="left:638px;top:282px;width:1px;height:20px;background:#8a8a8a;"></div>
<div style="left:738px;top:282px;width:1px;height:20px;background:#8a8a8a;"></div>
<div style="left:813px;top:282px;width:1px;height:20px;background:#8a8a8a;"></div>
<div style="left:913px;top:282px;width:1px;height:20px;background:#8a8a8a;"></div>
<div style="left:1013px;top:282px;width:1px;height:20px;background:#8a8a8a;"></div>
<div style="left:1113px;top:282px;width:1px;height:20px;background:#8a8a8a;"></div>
<div style="left:1213px;top:282px;width:1px;height:20px;background:#8a8a8a;"></div>
<div style="left:1313px;top:282px;width:1px;height:20px;background:#8a8a8a;"></div>
<div class="t" style="left:26px;width:300px;text-align:right;top:283px;color:#fff;letter-spacing:0.19px;">191:09:55:53.426.278.044</div>
<div class="t" style="left:225px;width:300px;text-align:right;top:283px;">Port: 3</div>
<div class="t" style="left:259px;width:300px;text-align:right;top:283px;">0</div>
<div class="t" style="left:436px;width:300px;text-align:right;top:283px;">ASM</div>
<div class="t" style="left:510px;width:300px;text-align:right;top:283px;">40</div>
<div class="t" style="left:610px;width:300px;text-align:right;top:283px;letter-spacing:-0.3px;">0xBCB55656</div>
<div class="t" style="left:710px;width:300px;text-align:right;top:283px;letter-spacing:-0.3px;">0x04</div>
<div class="t" style="left:810px;width:300px;text-align:right;top:283px;letter-spacing:-0.3px;">0x000012</div>
<div class="t" style="left:910px;width:300px;text-align:right;top:283px;letter-spacing:-0.3px;">0x00</div>
<div class="t" style="left:1010px;width:300px;text-align:right;top:283px;letter-spacing:-0.3px;">0x000022</div>
<div style="left:33px;top:284px;width:14px;height:14px;box-sizing:border-box;border:1px solid #400010;border-radius:2px;background:#600a20"></div>
<div style="left:0px;top:302px;width:28px;height:19px;background:#d4d0c8;"></div>
<div style="left:0px;top:302px;width:28px;height:1px;background:#ffffff;"></div>
<div style="left:0px;top:302px;width:1px;height:19px;background:#ffffff;"></div>
<div style="left:27px;top:303px;width:1px;height:18px;background:#808080;"></div>
<div style="left:1px;top:320px;width:27px;height:1px;background:#808080;"></div>
<div style="left:28px;top:302px;width:1px;height:20px;background:#404040;"></div>
<div style="left:0px;top:321px;width:29px;height:1px;background:#404040;"></div>
<div class="t" style="left:5px;top:306px;">15</div>
<div style="left:29px;top:302px;width:1262px;height:19px;background:#9cff9c;"></div>
<div style="left:29px;top:321px;width:1262px;height:1px;background:#8a8a8a;"></div>
<div style="left:328px;top:302px;width:1px;height:20px;background:#8a8a8a;"></div>
<div style="left:528px;top:302px;width:1px;height:20px;background:#8a8a8a;"></div>
<div style="left:563px;top:302px;width:1px;height:20px;background:#8a8a8a;"></div>
<div style="left:638px;top:302px;width:1px;height:20px;background:#8a8a8a;"></div>
<div style="left:738px;top:302px;width:1px;height:20px;background:#8a8a8a;"></div>
<div style="left:813px;top:302px;width:1px;height:20px;background:#8a8a8a;"></div>
<div style="left:913px;top:302px;width:1px;height:20px;background:#8a8a8a;"></div>
<div style="left:1013px;top:302px;width:1px;height:20px;background:#8a8a8a;"></div>
<div style="left:1113px;top:302px;width:1px;height:20px;background:#8a8a8a;"></div>
<div style="left:1213px;top:302px;width:1px;height:20px;background:#8a8a8a;"></div>
<div style="left:1313px;top:302px;width:1px;height:20px;background:#8a8a8a;"></div>
<div class="t" style="left:26px;width:300px;text-align:right;top:303px;letter-spacing:0.19px;">191:09:55:53.426.278.045</div>
<div class="t" style="left:225px;width:300px;text-align:right;top:303px;">Chassis: 2, Slot: 3, NodeIndex: 0</div>
<div class="t" style="left:259px;width:300px;text-align:right;top:303px;">0</div>
<div class="t" style="left:641px;top:303px;letter-spacing:-0.25px;">Self_ID_Packet_...</div>
<div class="t" style="left:510px;width:300px;text-align:right;top:303px;">32</div>
<div style="left:33px;top:304px;width:14px;height:14px;box-sizing:border-box;border:1px solid #000;border-radius:2px;background:#fff"></div>
<div style="left:0px;top:322px;width:28px;height:19px;background:#d4d0c8;"></div>
<div style="left:0px;top:322px;width:28px;height:1px;background:#ffffff;"></div>
<div style="left:0px;top:322px;width:1px;height:19px;background:#ffffff;"></div>
<div style="left:27px;top:323px;width:1px;height:18px;background:#808080;"></div>
<div style="left:1px;top:340px;width:27px;height:1px;background:#808080;"></div>
<div style="left:28px;top:322px;width:1px;height:20px;background:#404040;"></div>
<div style="left:0px;top:341px;width:29px;height:1px;background:#404040;"></div>
<div class="t" style="left:5px;top:326px;">16</div>
<div style="left:29px;top:322px;width:1262px;height:19px;background:#9cffff;"></div>
<div style="left:29px;top:341px;width:1262px;height:1px;background:#8a8a8a;"></div>
<div style="left:328px;top:322px;width:1px;height:20px;background:#8a8a8a;"></div>
<div style="left:528px;top:322px;width:1px;height:20px;background:#8a8a8a;"></div>
<div style="left:563px;top:322px;width:1px;height:20px;background:#8a8a8a;"></div>
<div style="left:638px;top:322px;width:1px;height:20px;background:#8a8a8a;"></div>
<div style="left:738px;top:322px;width:1px;height:20px;background:#8a8a8a;"></div>
<div style="left:813px;top:322px;width:1px;height:20px;background:#8a8a8a;"></div>
<div style="left:913px;top:322px;width:1px;height:20px;background:#8a8a8a;"></div>
<div style="left:1013px;top:322px;width:1px;height:20px;background:#8a8a8a;"></div>
<div style="left:1113px;top:322px;width:1px;height:20px;background:#8a8a8a;"></div>
<div style="left:1213px;top:322px;width:1px;height:20px;background:#8a8a8a;"></div>
<div style="left:1313px;top:322px;width:1px;height:20px;background:#8a8a8a;"></div>
<div class="t" style="left:26px;width:300px;text-align:right;top:323px;letter-spacing:0.19px;">191:09:55:53.426.278.045</div>
<div class="t" style="left:225px;width:300px;text-align:right;top:323px;">Chassis: 3, Slot: 4, NodeIndex: 1</div>
<div class="t" style="left:259px;width:300px;text-align:right;top:323px;">0</div>
<div class="t" style="left:641px;top:323px;letter-spacing:-0.25px;">Self_ID_Packet_...</div>
<div class="t" style="left:510px;width:300px;text-align:right;top:323px;">32</div>
<div style="left:33px;top:324px;width:14px;height:14px;box-sizing:border-box;border:1px solid #000;border-radius:2px;background:#fff"></div>
<div style="left:0px;top:342px;width:28px;height:19px;background:#d4d0c8;"></div>
<div style="left:0px;top:342px;width:28px;height:1px;background:#ffffff;"></div>
<div style="left:0px;top:342px;width:1px;height:19px;background:#ffffff;"></div>
<div style="left:27px;top:343px;width:1px;height:18px;background:#808080;"></div>
<div style="left:1px;top:360px;width:27px;height:1px;background:#808080;"></div>
<div style="left:28px;top:342px;width:1px;height:20px;background:#404040;"></div>
<div style="left:0px;top:361px;width:29px;height:1px;background:#404040;"></div>
<div class="t" style="left:5px;top:346px;">17</div>
<div style="left:29px;top:342px;width:1262px;height:19px;background:#ff9cff;"></div>
<div style="left:29px;top:361px;width:1262px;height:1px;background:#8a8a8a;"></div>
<div style="left:328px;top:342px;width:1px;height:20px;background:#8a8a8a;"></div>
<div style="left:528px;top:342px;width:1px;height:20px;background:#8a8a8a;"></div>
<div style="left:563px;top:342px;width:1px;height:20px;background:#8a8a8a;"></div>
<div style="left:638px;top:342px;width:1px;height:20px;background:#8a8a8a;"></div>
<div style="left:738px;top:342px;width:1px;height:20px;background:#8a8a8a;"></div>
<div style="left:813px;top:342px;width:1px;height:20px;background:#8a8a8a;"></div>
<div style="left:913px;top:342px;width:1px;height:20px;background:#8a8a8a;"></div>
<div style="left:1013px;top:342px;width:1px;height:20px;background:#8a8a8a;"></div>
<div style="left:1113px;top:342px;width:1px;height:20px;background:#8a8a8a;"></div>
<div style="left:1213px;top:342px;width:1px;height:20px;background:#8a8a8a;"></div>
<div style="left:1313px;top:342px;width:1px;height:20px;background:#8a8a8a;"></div>
<div class="t" style="left:26px;width:300px;text-align:right;top:343px;letter-spacing:0.19px;">191:09:55:53.426.278.045</div>
<div class="t" style="left:225px;width:300px;text-align:right;top:343px;">Chassis: 4, Slot: 5, NodeIndex: 2</div>
<div class="t" style="left:259px;width:300px;text-align:right;top:343px;">0</div>
<div class="t" style="left:641px;top:343px;letter-spacing:-0.25px;">Self_ID_Packet_...</div>
<div class="t" style="left:510px;width:300px;text-align:right;top:343px;">32</div>
<div style="left:33px;top:344px;width:14px;height:14px;box-sizing:border-box;border:1px solid #000;border-radius:2px;background:#fff"></div>
<div style="left:0px;top:362px;width:28px;height:19px;background:#d4d0c8;"></div>
<div style="left:0px;top:362px;width:28px;height:1px;background:#ffffff;"></div>
<div style="left:0px;top:362px;width:1px;height:19px;background:#ffffff;"></div>
<div style="left:27px;top:363px;width:1px;height:18px;background:#808080;"></div>
<div style="left:1px;top:380px;width:27px;height:1px;background:#808080;"></div>
<div style="left:28px;top:362px;width:1px;height:20px;background:#404040;"></div>
<div style="left:0px;top:381px;width:29px;height:1px;background:#404040;"></div>
<div class="t" style="left:5px;top:366px;">18</div>
<div style="left:29px;top:362px;width:1262px;height:19px;background:#9cff9c;"></div>
<div style="left:29px;top:381px;width:1262px;height:1px;background:#8a8a8a;"></div>
<div style="left:328px;top:362px;width:1px;height:20px;background:#8a8a8a;"></div>
<div style="left:528px;top:362px;width:1px;height:20px;background:#8a8a8a;"></div>
<div style="left:563px;top:362px;width:1px;height:20px;background:#8a8a8a;"></div>
<div style="left:638px;top:362px;width:1px;height:20px;background:#8a8a8a;"></div>
<div style="left:738px;top:362px;width:1px;height:20px;background:#8a8a8a;"></div>
<div style="left:813px;top:362px;width:1px;height:20px;background:#8a8a8a;"></div>
<div style="left:913px;top:362px;width:1px;height:20px;background:#8a8a8a;"></div>
<div style="left:1013px;top:362px;width:1px;height:20px;background:#8a8a8a;"></div>
<div style="left:1113px;top:362px;width:1px;height:20px;background:#8a8a8a;"></div>
<div style="left:1213px;top:362px;width:1px;height:20px;background:#8a8a8a;"></div>
<div style="left:1313px;top:362px;width:1px;height:20px;background:#8a8a8a;"></div>
<div class="t" style="left:26px;width:300px;text-align:right;top:363px;letter-spacing:0.19px;">191:09:55:53.426.278.046</div>
<div class="t" style="left:225px;width:300px;text-align:right;top:363px;">Chassis: 2, Slot: 3, NodeIndex: 0</div>
<div class="t" style="left:259px;width:300px;text-align:right;top:363px;">0</div>
<div class="t" style="left:641px;top:363px;letter-spacing:-0.25px;">Asynchronous_S...</div>
<div class="t" style="left:510px;width:300px;text-align:right;top:363px;">208</div>
<div style="left:33px;top:364px;width:14px;height:14px;box-sizing:border-box;border:1px solid #000;border-radius:2px;background:#fff"></div>
<div style="left:0px;top:382px;width:28px;height:19px;background:#d4d0c8;"></div>
<div style="left:0px;top:382px;width:28px;height:1px;background:#ffffff;"></div>
<div style="left:0px;top:382px;width:1px;height:19px;background:#ffffff;"></div>
<div style="left:27px;top:383px;width:1px;height:18px;background:#808080;"></div>
<div style="left:1px;top:400px;width:27px;height:1px;background:#808080;"></div>
<div style="left:28px;top:382px;width:1px;height:20px;background:#404040;"></div>
<div style="left:0px;top:401px;width:29px;height:1px;background:#404040;"></div>
<div class="t" style="left:5px;top:386px;">19</div>
<div style="left:29px;top:382px;width:1262px;height:19px;background:#9cffff;"></div>
<div style="left:29px;top:401px;width:1262px;height:1px;background:#8a8a8a;"></div>
<div style="left:328px;top:382px;width:1px;height:20px;background:#8a8a8a;"></div>
<div style="left:528px;top:382px;width:1px;height:20px;background:#8a8a8a;"></div>
<div style="left:563px;top:382px;width:1px;height:20px;background:#8a8a8a;"></div>
<div style="left:638px;top:382px;width:1px;height:20px;background:#8a8a8a;"></div>
<div style="left:738px;top:382px;width:1px;height:20px;background:#8a8a8a;"></div>
<div style="left:813px;top:382px;width:1px;height:20px;background:#8a8a8a;"></div>
<div style="left:913px;top:382px;width:1px;height:20px;background:#8a8a8a;"></div>
<div style="left:1013px;top:382px;width:1px;height:20px;background:#8a8a8a;"></div>
<div style="left:1113px;top:382px;width:1px;height:20px;background:#8a8a8a;"></div>
<div style="left:1213px;top:382px;width:1px;height:20px;background:#8a8a8a;"></div>
<div style="left:1313px;top:382px;width:1px;height:20px;background:#8a8a8a;"></div>
<div class="t" style="left:26px;width:300px;text-align:right;top:383px;letter-spacing:0.19px;">191:09:55:53.426.278.046</div>
<div class="t" style="left:225px;width:300px;text-align:right;top:383px;">Chassis: 3, Slot: 4, NodeIndex: 1</div>
<div class="t" style="left:259px;width:300px;text-align:right;top:383px;">0</div>
<div class="t" style="left:641px;top:383px;letter-spacing:-0.25px;">Asynchronous_S...</div>
<div class="t" style="left:510px;width:300px;text-align:right;top:383px;">208</div>
<div style="left:33px;top:384px;width:14px;height:14px;box-sizing:border-box;border:1px solid #000;border-radius:2px;background:#fff"></div>
</div>
<div style="left:1297px;top:77px;width:16px;height:402px;background:repeating-conic-gradient(#fff 0 25%,#d4d0c8 0 50%) 0 0/2px 2px;"></div>
<div style="left:1297px;top:77px;width:16px;height:16px;background:#d4d0c8;"></div>
<div style="left:1297px;top:77px;width:15px;height:1px;background:#ffffff;"></div>
<div style="left:1297px;top:77px;width:1px;height:15px;background:#ffffff;"></div>
<div style="left:1297px;top:92px;width:16px;height:1px;background:#404040;"></div>
<div style="left:1312px;top:77px;width:1px;height:16px;background:#404040;"></div>
<div style="left:1298px;top:91px;width:14px;height:1px;background:#808080;"></div>
<div style="left:1311px;top:78px;width:1px;height:14px;background:#808080;"></div>
<svg style="left:1301px;top:83px" width="7" height="4" viewBox="0 0 7 4"><path d="M3.5 0 L7 4 H0 Z" fill="#000"/></svg>
<div style="left:1297px;top:93px;width:16px;height:45px;background:#d4d0c8;"></div>
<div style="left:1298px;top:94px;width:14px;height:1px;background:#ffffff;"></div>
<div style="left:1298px;top:94px;width:1px;height:43px;background:#ffffff;"></div>
<div style="left:1297px;top:137px;width:16px;height:1px;background:#404040;"></div>
<div style="left:1312px;top:93px;width:1px;height:45px;background:#404040;"></div>
<div style="left:1298px;top:136px;width:14px;height:1px;background:#808080;"></div>
<div style="left:1311px;top:94px;width:1px;height:43px;background:#808080;"></div>
<div style="left:1297px;top:463px;width:16px;height:16px;background:#d4d0c8;"></div>
<div style="left:1297px;top:463px;width:15px;height:1px;background:#ffffff;"></div>
<div style="left:1297px;top:463px;width:1px;height:15px;background:#ffffff;"></div>
<div style="left:1297px;top:478px;width:16px;height:1px;background:#404040;"></div>
<div style="left:1312px;top:463px;width:1px;height:16px;background:#404040;"></div>
<div style="left:1298px;top:477px;width:14px;height:1px;background:#808080;"></div>
<div style="left:1311px;top:464px;width:1px;height:14px;background:#808080;"></div>
<svg style="left:1301px;top:469px" width="7" height="4" viewBox="0 0 7 4"><path d="M0 0 H7 L3.5 4 Z" fill="#000"/></svg>
<div style="left:6px;top:479px;width:1291px;height:16px;background:repeating-conic-gradient(#fff 0 25%,#d4d0c8 0 50%) 0 0/2px 2px;"></div>
<div style="left:6px;top:479px;width:16px;height:16px;background:#d4d0c8;"></div>
<div style="left:6px;top:479px;width:15px;height:1px;background:#ffffff;"></div>
<div style="left:6px;top:479px;width:1px;height:15px;background:#ffffff;"></div>
<div style="left:6px;top:494px;width:16px;height:1px;background:#404040;"></div>
<div style="left:21px;top:479px;width:1px;height:16px;background:#404040;"></div>
<div style="left:7px;top:493px;width:14px;height:1px;background:#808080;"></div>
<div style="left:20px;top:480px;width:1px;height:14px;background:#808080;"></div>
<svg style="left:12px;top:483px" width="4" height="7" viewBox="0 0 4 7"><path d="M4 0 V7 L0 3.5 Z" fill="#000"/></svg>
<div style="left:22px;top:479px;width:839px;height:16px;background:#d4d0c8;"></div>
<div style="left:23px;top:480px;width:837px;height:1px;background:#ffffff;"></div>
<div style="left:23px;top:480px;width:1px;height:14px;background:#ffffff;"></div>
<div style="left:22px;top:494px;width:839px;height:1px;background:#404040;"></div>
<div style="left:860px;top:479px;width:1px;height:16px;background:#404040;"></div>
<div style="left:23px;top:493px;width:837px;height:1px;background:#808080;"></div>
<div style="left:859px;top:480px;width:1px;height:14px;background:#808080;"></div>
<div style="left:1281px;top:479px;width:16px;height:16px;background:#d4d0c8;"></div>
<div style="left:1281px;top:479px;width:15px;height:1px;background:#ffffff;"></div>
<div style="left:1281px;top:479px;width:1px;height:15px;background:#ffffff;"></div>
<div style="left:1281px;top:494px;width:16px;height:1px;background:#404040;"></div>
<div style="left:1296px;top:479px;width:1px;height:16px;background:#404040;"></div>
<div style="left:1282px;top:493px;width:14px;height:1px;background:#808080;"></div>
<div style="left:1295px;top:480px;width:1px;height:14px;background:#808080;"></div>
<svg style="left:1287px;top:483px" width="4" height="7" viewBox="0 0 4 7"><path d="M0 0 V7 L4 3.5 Z" fill="#000"/></svg>
<div style="left:1297px;top:479px;width:16px;height:16px;background:#d4d0c8;"></div>
<div style="left:6px;top:497px;width:628px;height:25px;background:#d4d0c8;"></div>
<div style="left:6px;top:497px;width:627px;height:1px;background:#ffffff;"></div>
<div style="left:6px;top:497px;width:1px;height:24px;background:#ffffff;"></div>
<div style="left:6px;top:521px;width:628px;height:1px;background:#808080;"></div>
<div style="left:633px;top:497px;width:1px;height:25px;background:#404040;"></div>
<div style="left:634px;top:497px;width:679px;height:1px;background:#404040;"></div>
<div style="left:634px;top:497px;width:1px;height:25px;background:#404040;"></div>
<div style="left:634px;top:521px;width:679px;height:1px;background:#ffffff;"></div>
<div class="t" style="left:8px;top:504px;letter-spacing:0px;">T0 to Current:</div>
<div class="t" style="left:81px;top:504px;letter-spacing:0.2px;">000:00:00:00.000.000.000</div>
<div class="t" style="left:225px;top:504px;letter-spacing:0px;">T1 to Current:</div>
<div class="t" style="left:298px;top:504px;letter-spacing:0.2px;">000:00:00:00.000.000.000</div>
<div class="t" style="left:443px;top:504px;letter-spacing:-0.35px;">T0 to T1:</div>
<div class="t" style="left:491px;top:504px;letter-spacing:0.15px;">000:00:00:00.000.000.000</div>
<div style="left:5px;top:526px;width:371px;height:1px;background:#808080;"></div>
<div style="left:4px;top:526px;width:1px;height:305px;background:#808080;"></div>
<div style="left:5px;top:526px;width:1px;height:305px;background:#808080;"></div>
<div style="left:6px;top:527px;width:369px;height:1px;background:#404040;"></div>
<div style="left:6px;top:527px;width:1px;height:303px;background:#404040;"></div>
<div style="left:7px;top:528px;width:368px;height:302px;background:#ffffff;"></div>
<div style="left:375px;top:526px;width:1px;height:305px;background:#d4d0c8;"></div>
<div style="left:376px;top:526px;width:1px;height:307px;background:#ffffff;"></div>
<div style="left:5px;top:830px;width:371px;height:1px;background:#d4d0c8;"></div>
<div style="left:4px;top:831px;width:373px;height:1px;background:#ffffff;"></div>
<div style="left:7px;top:528px;width:50px;height:302px;background:#d4d0c8;"></div>
<div style="left:7px;top:528px;width:368px;height:21px;background:#d4d0c8;"></div>
<div style="left:55px;top:548px;width:320px;height:1px;background:#404040;"></div>
<div style="left:57px;top:528px;width:18px;height:21px;background:#d4d0c8;"></div>
<div style="left:57px;top:528px;width:17px;height:1px;background:#ffffff;"></div>
<div style="left:57px;top:528px;width:1px;height:20px;background:#ffffff;"></div>
<div style="left:57px;top:548px;width:18px;height:1px;background:#404040;"></div>
<div style="left:74px;top:528px;width:1px;height:21px;background:#404040;"></div>
<div style="left:58px;top:547px;width:16px;height:1px;background:#808080;"></div>
<div style="left:73px;top:529px;width:1px;height:19px;background:#808080;"></div>
<div class="m mc" style="left:55px;width:20px;text-align:center;top:534px">0</div>
<div style="left:75px;top:528px;width:20px;height:21px;background:#d4d0c8;"></div>
<div style="left:75px;top:528px;width:19px;height:1px;background:#ffffff;"></div>
<div style="left:75px;top:528px;width:1px;height:20px;background:#ffffff;"></div>
<div style="left:75px;top:548px;width:20px;height:1px;background:#404040;"></div>
<div style="left:94px;top:528px;width:1px;height:21px;background:#404040;"></div>
<div style="left:76px;top:547px;width:18px;height:1px;background:#808080;"></div>
<div style="left:93px;top:529px;width:1px;height:19px;background:#808080;"></div>
<div class="m mc" style="left:75px;width:20px;text-align:center;top:534px">1</div>
<div style="left:95px;top:528px;width:20px;height:21px;background:#d4d0c8;"></div>
<div style="left:95px;top:528px;width:19px;height:1px;background:#ffffff;"></div>
<div style="left:95px;top:528px;width:1px;height:20px;background:#ffffff;"></div>
<div style="left:95px;top:548px;width:20px;height:1px;background:#404040;"></div>
<div style="left:114px;top:528px;width:1px;height:21px;background:#404040;"></div>
<div style="left:96px;top:547px;width:18px;height:1px;background:#808080;"></div>
<div style="left:113px;top:529px;width:1px;height:19px;background:#808080;"></div>
<div class="m mc" style="left:95px;width:20px;text-align:center;top:534px">2</div>
<div style="left:115px;top:528px;width:20px;height:21px;background:#d4d0c8;"></div>
<div style="left:115px;top:528px;width:19px;height:1px;background:#ffffff;"></div>
<div style="left:115px;top:528px;width:1px;height:20px;background:#ffffff;"></div>
<div style="left:115px;top:548px;width:20px;height:1px;background:#404040;"></div>
<div style="left:134px;top:528px;width:1px;height:21px;background:#404040;"></div>
<div style="left:116px;top:547px;width:18px;height:1px;background:#808080;"></div>
<div style="left:133px;top:529px;width:1px;height:19px;background:#808080;"></div>
<div class="m mc" style="left:115px;width:20px;text-align:center;top:534px">3</div>
<div style="left:135px;top:528px;width:20px;height:21px;background:#d4d0c8;"></div>
<div style="left:135px;top:528px;width:19px;height:1px;background:#ffffff;"></div>
<div style="left:135px;top:528px;width:1px;height:20px;background:#ffffff;"></div>
<div style="left:135px;top:548px;width:20px;height:1px;background:#404040;"></div>
<div style="left:154px;top:528px;width:1px;height:21px;background:#404040;"></div>
<div style="left:136px;top:547px;width:18px;height:1px;background:#808080;"></div>
<div style="left:153px;top:529px;width:1px;height:19px;background:#808080;"></div>
<div class="m mc" style="left:135px;width:20px;text-align:center;top:534px">4</div>
<div style="left:155px;top:528px;width:20px;height:21px;background:#d4d0c8;"></div>
<div style="left:155px;top:528px;width:19px;height:1px;background:#ffffff;"></div>
<div style="left:155px;top:528px;width:1px;height:20px;background:#ffffff;"></div>
<div style="left:155px;top:548px;width:20px;height:1px;background:#404040;"></div>
<div style="left:174px;top:528px;width:1px;height:21px;background:#404040;"></div>
<div style="left:156px;top:547px;width:18px;height:1px;background:#808080;"></div>
<div style="left:173px;top:529px;width:1px;height:19px;background:#808080;"></div>
<div class="m mc" style="left:155px;width:20px;text-align:center;top:534px">5</div>
<div style="left:175px;top:528px;width:20px;height:21px;background:#d4d0c8;"></div>
<div style="left:175px;top:528px;width:19px;height:1px;background:#ffffff;"></div>
<div style="left:175px;top:528px;width:1px;height:20px;background:#ffffff;"></div>
<div style="left:175px;top:548px;width:20px;height:1px;background:#404040;"></div>
<div style="left:194px;top:528px;width:1px;height:21px;background:#404040;"></div>
<div style="left:176px;top:547px;width:18px;height:1px;background:#808080;"></div>
<div style="left:193px;top:529px;width:1px;height:19px;background:#808080;"></div>
<div class="m mc" style="left:175px;width:20px;text-align:center;top:534px">6</div>
<div style="left:195px;top:528px;width:20px;height:21px;background:#d4d0c8;"></div>
<div style="left:195px;top:528px;width:19px;height:1px;background:#ffffff;"></div>
<div style="left:195px;top:528px;width:1px;height:20px;background:#ffffff;"></div>
<div style="left:195px;top:548px;width:20px;height:1px;background:#404040;"></div>
<div style="left:214px;top:528px;width:1px;height:21px;background:#404040;"></div>
<div style="left:196px;top:547px;width:18px;height:1px;background:#808080;"></div>
<div style="left:213px;top:529px;width:1px;height:19px;background:#808080;"></div>
<div class="m mc" style="left:195px;width:20px;text-align:center;top:534px">7</div>
<div style="left:215px;top:528px;width:20px;height:21px;background:#d4d0c8;"></div>
<div style="left:215px;top:528px;width:19px;height:1px;background:#ffffff;"></div>
<div style="left:215px;top:528px;width:1px;height:20px;background:#ffffff;"></div>
<div style="left:215px;top:548px;width:20px;height:1px;background:#404040;"></div>
<div style="left:234px;top:528px;width:1px;height:21px;background:#404040;"></div>
<div style="left:216px;top:547px;width:18px;height:1px;background:#808080;"></div>
<div style="left:233px;top:529px;width:1px;height:19px;background:#808080;"></div>
<div class="m mc" style="left:215px;width:20px;text-align:center;top:534px">8</div>
<div style="left:235px;top:528px;width:20px;height:21px;background:#d4d0c8;"></div>
<div style="left:235px;top:528px;width:19px;height:1px;background:#ffffff;"></div>
<div style="left:235px;top:528px;width:1px;height:20px;background:#ffffff;"></div>
<div style="left:235px;top:548px;width:20px;height:1px;background:#404040;"></div>
<div style="left:254px;top:528px;width:1px;height:21px;background:#404040;"></div>
<div style="left:236px;top:547px;width:18px;height:1px;background:#808080;"></div>
<div style="left:253px;top:529px;width:1px;height:19px;background:#808080;"></div>
<div class="m mc" style="left:235px;width:20px;text-align:center;top:534px">9</div>
<div style="left:255px;top:528px;width:20px;height:21px;background:#d4d0c8;"></div>
<div style="left:255px;top:528px;width:19px;height:1px;background:#ffffff;"></div>
<div style="left:255px;top:528px;width:1px;height:20px;background:#ffffff;"></div>
<div style="left:255px;top:548px;width:20px;height:1px;background:#404040;"></div>
<div style="left:274px;top:528px;width:1px;height:21px;background:#404040;"></div>
<div style="left:256px;top:547px;width:18px;height:1px;background:#808080;"></div>
<div style="left:273px;top:529px;width:1px;height:19px;background:#808080;"></div>
<div class="m mc" style="left:255px;width:20px;text-align:center;top:534px">A</div>
<div style="left:275px;top:528px;width:20px;height:21px;background:#d4d0c8;"></div>
<div style="left:275px;top:528px;width:19px;height:1px;background:#ffffff;"></div>
<div style="left:275px;top:528px;width:1px;height:20px;background:#ffffff;"></div>
<div style="left:275px;top:548px;width:20px;height:1px;background:#404040;"></div>
<div style="left:294px;top:528px;width:1px;height:21px;background:#404040;"></div>
<div style="left:276px;top:547px;width:18px;height:1px;background:#808080;"></div>
<div style="left:293px;top:529px;width:1px;height:19px;background:#808080;"></div>
<div class="m mc" style="left:275px;width:20px;text-align:center;top:534px">B</div>
<div style="left:295px;top:528px;width:20px;height:21px;background:#d4d0c8;"></div>
<div style="left:295px;top:528px;width:19px;height:1px;background:#ffffff;"></div>
<div style="left:295px;top:528px;width:1px;height:20px;background:#ffffff;"></div>
<div style="left:295px;top:548px;width:20px;height:1px;background:#404040;"></div>
<div style="left:314px;top:528px;width:1px;height:21px;background:#404040;"></div>
<div style="left:296px;top:547px;width:18px;height:1px;background:#808080;"></div>
<div style="left:313px;top:529px;width:1px;height:19px;background:#808080;"></div>
<div class="m mc" style="left:295px;width:20px;text-align:center;top:534px">C</div>
<div style="left:315px;top:528px;width:20px;height:21px;background:#d4d0c8;"></div>
<div style="left:315px;top:528px;width:19px;height:1px;background:#ffffff;"></div>
<div style="left:315px;top:528px;width:1px;height:20px;background:#ffffff;"></div>
<div style="left:315px;top:548px;width:20px;height:1px;background:#404040;"></div>
<div style="left:334px;top:528px;width:1px;height:21px;background:#404040;"></div>
<div style="left:316px;top:547px;width:18px;height:1px;background:#808080;"></div>
<div style="left:333px;top:529px;width:1px;height:19px;background:#808080;"></div>
<div class="m mc" style="left:315px;width:20px;text-align:center;top:534px">D</div>
<div style="left:335px;top:528px;width:20px;height:21px;background:#d4d0c8;"></div>
<div style="left:335px;top:528px;width:19px;height:1px;background:#ffffff;"></div>
<div style="left:335px;top:528px;width:1px;height:20px;background:#ffffff;"></div>
<div style="left:335px;top:548px;width:20px;height:1px;background:#404040;"></div>
<div style="left:354px;top:528px;width:1px;height:21px;background:#404040;"></div>
<div style="left:336px;top:547px;width:18px;height:1px;background:#808080;"></div>
<div style="left:353px;top:529px;width:1px;height:19px;background:#808080;"></div>
<div class="m mc" style="left:335px;width:20px;text-align:center;top:534px">E</div>
<div style="left:355px;top:528px;width:20px;height:21px;background:#d4d0c8;"></div>
<div style="left:355px;top:528px;width:19px;height:1px;background:#ffffff;"></div>
<div style="left:355px;top:528px;width:1px;height:20px;background:#ffffff;"></div>
<div style="left:355px;top:548px;width:20px;height:1px;background:#404040;"></div>
<div style="left:374px;top:528px;width:1px;height:21px;background:#404040;"></div>
<div style="left:356px;top:547px;width:18px;height:1px;background:#808080;"></div>
<div style="left:373px;top:529px;width:1px;height:19px;background:#808080;"></div>
<div class="m mc" style="left:355px;width:20px;text-align:center;top:534px">F</div>
<div style="left:7px;top:549px;width:50px;height:20px;background:#d4d0c8;"></div>
<div style="left:7px;top:549px;width:49px;height:1px;background:#ffffff;"></div>
<div style="left:7px;top:549px;width:1px;height:19px;background:#ffffff;"></div>
<div style="left:7px;top:568px;width:50px;height:1px;background:#404040;"></div>
<div style="left:56px;top:549px;width:1px;height:20px;background:#404040;"></div>
<div style="left:8px;top:567px;width:48px;height:1px;background:#808080;"></div>
<div style="left:55px;top:550px;width:1px;height:18px;background:#808080;"></div>
<div class="m" style="left:11px;top:555px;transform:scaleX(1.08)">0x0000</div>
<div style="left:7px;top:569px;width:50px;height:20px;background:#d4d0c8;"></div>
<div style="left:7px;top:569px;width:49px;height:1px;background:#ffffff;"></div>
<div style="left:7px;top:569px;width:1px;height:19px;background:#ffffff;"></div>
<div style="left:7px;top:588px;width:50px;height:1px;background:#404040;"></div>
<div style="left:56px;top:569px;width:1px;height:20px;background:#404040;"></div>
<div style="left:8px;top:587px;width:48px;height:1px;background:#808080;"></div>
<div style="left:55px;top:570px;width:1px;height:18px;background:#808080;"></div>
<div class="m" style="left:11px;top:575px;transform:scaleX(1.08)">0x0010</div>
<div style="left:7px;top:589px;width:50px;height:20px;background:#d4d0c8;"></div>
<div style="left:7px;top:589px;width:49px;height:1px;background:#ffffff;"></div>
<div style="left:7px;top:589px;width:1px;height:19px;background:#ffffff;"></div>
<div style="left:7px;top:608px;width:50px;height:1px;background:#404040;"></div>
<div style="left:56px;top:589px;width:1px;height:20px;background:#404040;"></div>
<div style="left:8px;top:607px;width:48px;height:1px;background:#808080;"></div>
<div style="left:55px;top:590px;width:1px;height:18px;background:#808080;"></div>
<div class="m" style="left:11px;top:595px;transform:scaleX(1.08)">0x0020</div>
<div style="left:295px;top:570px;width:80px;height:20px;background:#0a246a;"></div>
<div class="m" style="left:57px;top:555px;">BC</div>
<div class="m" style="left:77px;top:555px;">B5</div>
<div class="m" style="left:97px;top:555px;">56</div>
<div class="m" style="left:117px;top:555px;">56</div>
<div class="m" style="left:137px;top:555px;">04</div>
<div class="m" style="left:157px;top:555px;">00</div>
<div class="m" style="left:177px;top:555px;">00</div>
<div class="m" style="left:197px;top:555px;">12</div>
<div class="m" style="left:217px;top:555px;">00</div>
<div class="m" style="left:237px;top:555px;">00</div>
<div class="m" style="left:257px;top:555px;">00</div>
<div class="m" style="left:277px;top:555px;">22</div>
<div class="m" style="left:297px;top:555px;">49</div>
<div class="m" style="left:317px;top:555px;">38</div>
<div class="m" style="left:337px;top:555px;">00</div>
<div class="m" style="left:357px;top:555px;">00</div>
<div class="m" style="left:57px;top:575px;">46</div>
<div class="m" style="left:77px;top:575px;">00</div>
<div class="m" style="left:97px;top:575px;">00</div>
<div class="m" style="left:117px;top:575px;">00</div>
<div class="m" style="left:137px;top:575px;">03</div>
<div class="m" style="left:157px;top:575px;">B1</div>
<div class="m" style="left:177px;top:575px;">FF</div>
<div class="m" style="left:197px;top:575px;">FF</div>
<div class="m" style="left:217px;top:575px;">00</div>
<div class="m" style="left:237px;top:575px;">00</div>
<div class="m" style="left:257px;top:575px;">00</div>
<div class="m" style="left:277px;top:575px;">00</div>
<div class="m" style="left:297px;top:575px;color:#fff;">00</div>
<div class="m" style="left:317px;top:575px;color:#fff;">00</div>
<div class="m" style="left:337px;top:575px;color:#fff;">00</div>
<div class="m" style="left:357px;top:575px;color:#fff;">12</div>
<div class="m" style="left:57px;top:595px;">C8</div>
<div class="m" style="left:77px;top:595px;">FD</div>
<div class="m" style="left:97px;top:595px;">3C</div>
<div class="m" style="left:117px;top:595px;">03</div>
<div class="m" style="left:137px;top:595px;">BC</div>
<div class="m" style="left:157px;top:595px;">95</div>
<div class="m" style="left:177px;top:595px;">75</div>
<div class="m" style="left:197px;top:595px;">75</div>
<div style="left:377px;top:526px;width:345px;height:1px;background:#808080;"></div>
<div style="left:377px;top:526px;width:1px;height:305px;background:#808080;"></div>
<div style="left:378px;top:527px;width:343px;height:1px;background:#404040;"></div>
<div style="left:378px;top:527px;width:1px;height:303px;background:#404040;"></div>
<div style="left:379px;top:528px;width:336px;height:302px;background:#ffffff;"></div>
<div style="left:715px;top:526px;width:1px;height:305px;background:#d4d0c8;"></div>
<div style="left:716px;top:526px;width:1px;height:307px;background:#ffffff;"></div>
<div style="left:377px;top:830px;width:339px;height:1px;background:#d4d0c8;"></div>
<div style="left:377px;top:831px;width:340px;height:1px;background:#ffffff;"></div>
<div style="left:379px;top:548px;width:320px;height:1px;background:#404040;"></div>
<div style="left:379px;top:528px;width:20px;height:21px;background:#d4d0c8;"></div>
<div style="left:379px;top:528px;width:19px;height:1px;background:#ffffff;"></div>
<div style="left:379px;top:528px;width:1px;height:20px;background:#ffffff;"></div>
<div style="left:379px;top:548px;width:20px;height:1px;background:#404040;"></div>
<div style="left:398px;top:528px;width:1px;height:21px;background:#404040;"></div>
<div style="left:380px;top:547px;width:18px;height:1px;background:#808080;"></div>
<div style="left:397px;top:529px;width:1px;height:19px;background:#808080;"></div>
<div class="m mc" style="left:379px;width:20px;text-align:center;top:534px">0</div>
<div style="left:399px;top:528px;width:20px;height:21px;background:#d4d0c8;"></div>
<div style="left:399px;top:528px;width:19px;height:1px;background:#ffffff;"></div>
<div style="left:399px;top:528px;width:1px;height:20px;background:#ffffff;"></div>
<div style="left:399px;top:548px;width:20px;height:1px;background:#404040;"></div>
<div style="left:418px;top:528px;width:1px;height:21px;background:#404040;"></div>
<div style="left:400px;top:547px;width:18px;height:1px;background:#808080;"></div>
<div style="left:417px;top:529px;width:1px;height:19px;background:#808080;"></div>
<div class="m mc" style="left:399px;width:20px;text-align:center;top:534px">1</div>
<div style="left:419px;top:528px;width:20px;height:21px;background:#d4d0c8;"></div>
<div style="left:419px;top:528px;width:19px;height:1px;background:#ffffff;"></div>
<div style="left:419px;top:528px;width:1px;height:20px;background:#ffffff;"></div>
<div style="left:419px;top:548px;width:20px;height:1px;background:#404040;"></div>
<div style="left:438px;top:528px;width:1px;height:21px;background:#404040;"></div>
<div style="left:420px;top:547px;width:18px;height:1px;background:#808080;"></div>
<div style="left:437px;top:529px;width:1px;height:19px;background:#808080;"></div>
<div class="m mc" style="left:419px;width:20px;text-align:center;top:534px">2</div>
<div style="left:439px;top:528px;width:20px;height:21px;background:#d4d0c8;"></div>
<div style="left:439px;top:528px;width:19px;height:1px;background:#ffffff;"></div>
<div style="left:439px;top:528px;width:1px;height:20px;background:#ffffff;"></div>
<div style="left:439px;top:548px;width:20px;height:1px;background:#404040;"></div>
<div style="left:458px;top:528px;width:1px;height:21px;background:#404040;"></div>
<div style="left:440px;top:547px;width:18px;height:1px;background:#808080;"></div>
<div style="left:457px;top:529px;width:1px;height:19px;background:#808080;"></div>
<div class="m mc" style="left:439px;width:20px;text-align:center;top:534px">3</div>
<div style="left:459px;top:528px;width:20px;height:21px;background:#d4d0c8;"></div>
<div style="left:459px;top:528px;width:19px;height:1px;background:#ffffff;"></div>
<div style="left:459px;top:528px;width:1px;height:20px;background:#ffffff;"></div>
<div style="left:459px;top:548px;width:20px;height:1px;background:#404040;"></div>
<div style="left:478px;top:528px;width:1px;height:21px;background:#404040;"></div>
<div style="left:460px;top:547px;width:18px;height:1px;background:#808080;"></div>
<div style="left:477px;top:529px;width:1px;height:19px;background:#808080;"></div>
<div class="m mc" style="left:459px;width:20px;text-align:center;top:534px">4</div>
<div style="left:479px;top:528px;width:20px;height:21px;background:#d4d0c8;"></div>
<div style="left:479px;top:528px;width:19px;height:1px;background:#ffffff;"></div>
<div style="left:479px;top:528px;width:1px;height:20px;background:#ffffff;"></div>
<div style="left:479px;top:548px;width:20px;height:1px;background:#404040;"></div>
<div style="left:498px;top:528px;width:1px;height:21px;background:#404040;"></div>
<div style="left:480px;top:547px;width:18px;height:1px;background:#808080;"></div>
<div style="left:497px;top:529px;width:1px;height:19px;background:#808080;"></div>
<div class="m mc" style="left:479px;width:20px;text-align:center;top:534px">5</div>
<div style="left:499px;top:528px;width:20px;height:21px;background:#d4d0c8;"></div>
<div style="left:499px;top:528px;width:19px;height:1px;background:#ffffff;"></div>
<div style="left:499px;top:528px;width:1px;height:20px;background:#ffffff;"></div>
<div style="left:499px;top:548px;width:20px;height:1px;background:#404040;"></div>
<div style="left:518px;top:528px;width:1px;height:21px;background:#404040;"></div>
<div style="left:500px;top:547px;width:18px;height:1px;background:#808080;"></div>
<div style="left:517px;top:529px;width:1px;height:19px;background:#808080;"></div>
<div class="m mc" style="left:499px;width:20px;text-align:center;top:534px">6</div>
<div style="left:519px;top:528px;width:20px;height:21px;background:#d4d0c8;"></div>
<div style="left:519px;top:528px;width:19px;height:1px;background:#ffffff;"></div>
<div style="left:519px;top:528px;width:1px;height:20px;background:#ffffff;"></div>
<div style="left:519px;top:548px;width:20px;height:1px;background:#404040;"></div>
<div style="left:538px;top:528px;width:1px;height:21px;background:#404040;"></div>
<div style="left:520px;top:547px;width:18px;height:1px;background:#808080;"></div>
<div style="left:537px;top:529px;width:1px;height:19px;background:#808080;"></div>
<div class="m mc" style="left:519px;width:20px;text-align:center;top:534px">7</div>
<div style="left:539px;top:528px;width:20px;height:21px;background:#d4d0c8;"></div>
<div style="left:539px;top:528px;width:19px;height:1px;background:#ffffff;"></div>
<div style="left:539px;top:528px;width:1px;height:20px;background:#ffffff;"></div>
<div style="left:539px;top:548px;width:20px;height:1px;background:#404040;"></div>
<div style="left:558px;top:528px;width:1px;height:21px;background:#404040;"></div>
<div style="left:540px;top:547px;width:18px;height:1px;background:#808080;"></div>
<div style="left:557px;top:529px;width:1px;height:19px;background:#808080;"></div>
<div class="m mc" style="left:539px;width:20px;text-align:center;top:534px">8</div>
<div style="left:559px;top:528px;width:20px;height:21px;background:#d4d0c8;"></div>
<div style="left:559px;top:528px;width:19px;height:1px;background:#ffffff;"></div>
<div style="left:559px;top:528px;width:1px;height:20px;background:#ffffff;"></div>
<div style="left:559px;top:548px;width:20px;height:1px;background:#404040;"></div>
<div style="left:578px;top:528px;width:1px;height:21px;background:#404040;"></div>
<div style="left:560px;top:547px;width:18px;height:1px;background:#808080;"></div>
<div style="left:577px;top:529px;width:1px;height:19px;background:#808080;"></div>
<div class="m mc" style="left:559px;width:20px;text-align:center;top:534px">9</div>
<div style="left:579px;top:528px;width:20px;height:21px;background:#d4d0c8;"></div>
<div style="left:579px;top:528px;width:19px;height:1px;background:#ffffff;"></div>
<div style="left:579px;top:528px;width:1px;height:20px;background:#ffffff;"></div>
<div style="left:579px;top:548px;width:20px;height:1px;background:#404040;"></div>
<div style="left:598px;top:528px;width:1px;height:21px;background:#404040;"></div>
<div style="left:580px;top:547px;width:18px;height:1px;background:#808080;"></div>
<div style="left:597px;top:529px;width:1px;height:19px;background:#808080;"></div>
<div class="m mc" style="left:579px;width:20px;text-align:center;top:534px">A</div>
<div style="left:599px;top:528px;width:20px;height:21px;background:#d4d0c8;"></div>
<div style="left:599px;top:528px;width:19px;height:1px;background:#ffffff;"></div>
<div style="left:599px;top:528px;width:1px;height:20px;background:#ffffff;"></div>
<div style="left:599px;top:548px;width:20px;height:1px;background:#404040;"></div>
<div style="left:618px;top:528px;width:1px;height:21px;background:#404040;"></div>
<div style="left:600px;top:547px;width:18px;height:1px;background:#808080;"></div>
<div style="left:617px;top:529px;width:1px;height:19px;background:#808080;"></div>
<div class="m mc" style="left:599px;width:20px;text-align:center;top:534px">B</div>
<div style="left:619px;top:528px;width:20px;height:21px;background:#d4d0c8;"></div>
<div style="left:619px;top:528px;width:19px;height:1px;background:#ffffff;"></div>
<div style="left:619px;top:528px;width:1px;height:20px;background:#ffffff;"></div>
<div style="left:619px;top:548px;width:20px;height:1px;background:#404040;"></div>
<div style="left:638px;top:528px;width:1px;height:21px;background:#404040;"></div>
<div style="left:620px;top:547px;width:18px;height:1px;background:#808080;"></div>
<div style="left:637px;top:529px;width:1px;height:19px;background:#808080;"></div>
<div class="m mc" style="left:619px;width:20px;text-align:center;top:534px">C</div>
<div style="left:639px;top:528px;width:20px;height:21px;background:#d4d0c8;"></div>
<div style="left:639px;top:528px;width:19px;height:1px;background:#ffffff;"></div>
<div style="left:639px;top:528px;width:1px;height:20px;background:#ffffff;"></div>
<div style="left:639px;top:548px;width:20px;height:1px;background:#404040;"></div>
<div style="left:658px;top:528px;width:1px;height:21px;background:#404040;"></div>
<div style="left:640px;top:547px;width:18px;height:1px;background:#808080;"></div>
<div style="left:657px;top:529px;width:1px;height:19px;background:#808080;"></div>
<div class="m mc" style="left:639px;width:20px;text-align:center;top:534px">D</div>
<div style="left:659px;top:528px;width:20px;height:21px;background:#d4d0c8;"></div>
<div style="left:659px;top:528px;width:19px;height:1px;background:#ffffff;"></div>
<div style="left:659px;top:528px;width:1px;height:20px;background:#ffffff;"></div>
<div style="left:659px;top:548px;width:20px;height:1px;background:#404040;"></div>
<div style="left:678px;top:528px;width:1px;height:21px;background:#404040;"></div>
<div style="left:660px;top:547px;width:18px;height:1px;background:#808080;"></div>
<div style="left:677px;top:529px;width:1px;height:19px;background:#808080;"></div>
<div class="m mc" style="left:659px;width:20px;text-align:center;top:534px">E</div>
<div style="left:679px;top:528px;width:20px;height:21px;background:#d4d0c8;"></div>
<div style="left:679px;top:528px;width:19px;height:1px;background:#ffffff;"></div>
<div style="left:679px;top:528px;width:1px;height:20px;background:#ffffff;"></div>
<div style="left:679px;top:548px;width:20px;height:1px;background:#404040;"></div>
<div style="left:698px;top:528px;width:1px;height:21px;background:#404040;"></div>
<div style="left:680px;top:547px;width:18px;height:1px;background:#808080;"></div>
<div style="left:697px;top:529px;width:1px;height:19px;background:#808080;"></div>
<div class="m mc" style="left:679px;width:20px;text-align:center;top:534px">F</div>
<div style="left:699px;top:528px;width:16px;height:302px;background:repeating-conic-gradient(#fff 0 25%,#d4d0c8 0 50%) 0 0/2px 2px;"></div>
<div style="left:699px;top:528px;width:16px;height:16px;background:#d4d0c8;"></div>
<div style="left:699px;top:528px;width:15px;height:1px;background:#ffffff;"></div>
<div style="left:699px;top:528px;width:1px;height:15px;background:#ffffff;"></div>
<div style="left:699px;top:543px;width:16px;height:1px;background:#404040;"></div>
<div style="left:714px;top:528px;width:1px;height:16px;background:#404040;"></div>
<div style="left:700px;top:542px;width:14px;height:1px;background:#808080;"></div>
<div style="left:713px;top:529px;width:1px;height:14px;background:#808080;"></div>
<svg style="left:703px;top:534px" width="7" height="4" viewBox="0 0 7 4"><path d="M3.5 0 L7 4 H0 Z" fill="#a0a0a0"/></svg>
<div style="left:699px;top:814px;width:16px;height:16px;background:#d4d0c8;"></div>
<div style="left:699px;top:814px;width:15px;height:1px;background:#ffffff;"></div>
<div style="left:699px;top:814px;width:1px;height:15px;background:#ffffff;"></div>
<div style="left:699px;top:829px;width:16px;height:1px;background:#404040;"></div>
<div style="left:714px;top:814px;width:1px;height:16px;background:#404040;"></div>
<div style="left:700px;top:828px;width:14px;height:1px;background:#808080;"></div>
<div style="left:713px;top:815px;width:1px;height:14px;background:#808080;"></div>
<svg style="left:703px;top:820px" width="7" height="4" viewBox="0 0 7 4"><path d="M0 0 H7 L3.5 4 Z" fill="#a0a0a0"/></svg>
<div style="left:619px;top:570px;width:80px;height:20px;background:#0a246a;"></div>
<div class="m mc" style="left:379px;width:20px;text-align:center;top:555px;">.</div>
<div class="m mc" style="left:399px;width:20px;text-align:center;top:555px;">.</div>
<div class="m mc" style="left:419px;width:20px;text-align:center;top:555px;">V</div>
<div class="m mc" style="left:439px;width:20px;text-align:center;top:555px;">V</div>
<div class="m mc" style="left:459px;width:20px;text-align:center;top:555px;">.</div>
<div class="m mc" style="left:479px;width:20px;text-align:center;top:555px;">.</div>
<div class="m mc" style="left:499px;width:20px;text-align:center;top:555px;">.</div>
<div class="m mc" style="left:519px;width:20px;text-align:center;top:555px;">.</div>
<div class="m mc" style="left:539px;width:20px;text-align:center;top:555px;">.</div>
<div class="m mc" style="left:559px;width:20px;text-align:center;top:555px;">.</div>
<div class="m mc" style="left:579px;width:20px;text-align:center;top:555px;">.</div>
<div class="m mc" style="left:599px;width:20px;text-align:center;top:555px;">&quot;</div>
<div class="m mc" style="left:619px;width:20px;text-align:center;top:555px;">I</div>
<div class="m mc" style="left:639px;width:20px;text-align:center;top:555px;">8</div>
<div class="m mc" style="left:659px;width:20px;text-align:center;top:555px;">.</div>
<div class="m mc" style="left:679px;width:20px;text-align:center;top:555px;">.</div>
<div class="m mc" style="left:379px;width:20px;text-align:center;top:575px;">F</div>
<div class="m mc" style="left:399px;width:20px;text-align:center;top:575px;">.</div>
<div class="m mc" style="left:419px;width:20px;text-align:center;top:575px;">.</div>
<div class="m mc" style="left:439px;width:20px;text-align:center;top:575px;">.</div>
<div class="m mc" style="left:459px;width:20px;text-align:center;top:575px;">.</div>
<div class="m mc" style="left:479px;width:20px;text-align:center;top:575px;">.</div>
<div class="m mc" style="left:499px;width:20px;text-align:center;top:575px;">.</div>
<div class="m mc" style="left:519px;width:20px;text-align:center;top:575px;">.</div>
<div class="m mc" style="left:539px;width:20px;text-align:center;top:575px;">.</div>
<div class="m mc" style="left:559px;width:20px;text-align:center;top:575px;">.</div>
<div class="m mc" style="left:579px;width:20px;text-align:center;top:575px;">.</div>
<div class="m mc" style="left:599px;width:20px;text-align:center;top:575px;">.</div>
<div class="m mc" style="left:619px;width:20px;text-align:center;top:575px;color:#fff;">.</div>
<div class="m mc" style="left:639px;width:20px;text-align:center;top:575px;color:#fff;">.</div>
<div class="m mc" style="left:659px;width:20px;text-align:center;top:575px;color:#fff;">.</div>
<div class="m mc" style="left:679px;width:20px;text-align:center;top:575px;color:#fff;">.</div>
<div class="m mc" style="left:379px;width:20px;text-align:center;top:595px;">.</div>
<div class="m mc" style="left:399px;width:20px;text-align:center;top:595px;">.</div>
<div class="m mc" style="left:419px;width:20px;text-align:center;top:595px;">&lt;</div>
<div class="m mc" style="left:439px;width:20px;text-align:center;top:595px;">.</div>
<div class="m mc" style="left:459px;width:20px;text-align:center;top:595px;">.</div>
<div class="m mc" style="left:479px;width:20px;text-align:center;top:595px;">.</div>
<div class="m mc" style="left:499px;width:20px;text-align:center;top:595px;">u</div>
<div class="m mc" style="left:519px;width:20px;text-align:center;top:595px;">u</div>
<div style="left:721px;top:526px;width:594px;height:1px;background:#808080;"></div>
<div style="left:721px;top:526px;width:1px;height:305px;background:#808080;"></div>
<div style="left:722px;top:527px;width:591px;height:1px;background:#404040;"></div>
<div style="left:722px;top:527px;width:1px;height:303px;background:#404040;"></div>
<div style="left:723px;top:528px;width:589px;height:302px;background:#ffffff;"></div>
<div style="left:721px;top:830px;width:592px;height:1px;background:#d4d0c8;"></div>
<div style="left:1312px;top:526px;width:1px;height:305px;background:#d4d0c8;"></div>
<div style="left:721px;top:831px;width:594px;height:1px;background:#ffffff;"></div>
<div style="left:4px;top:832px;width:1311px;height:1px;background:#ffffff;"></div>
<div style="left:1313px;top:526px;width:1px;height:307px;background:#ffffff;"></div>
<div style="left:1314px;top:526px;width:1px;height:307px;background:#ffffff;"></div>
<div style="left:753px;top:547px;width:1px;height:1px;background:#808080;"></div>
<div style="left:753px;top:549px;width:1px;height:1px;background:#808080;"></div>
<div style="left:753px;top:551px;width:1px;height:1px;background:#808080;"></div>
<div style="left:753px;top:553px;width:1px;height:1px;background:#808080;"></div>
<div style="left:753px;top:555px;width:1px;height:1px;background:#808080;"></div>
<div style="left:753px;top:557px;width:1px;height:1px;background:#808080;"></div>
<div style="left:753px;top:559px;width:1px;height:1px;background:#808080;"></div>
<div style="left:753px;top:561px;width:1px;height:1px;background:#808080;"></div>
<div style="left:753px;top:563px;width:1px;height:1px;background:#808080;"></div>
<div style="left:753px;top:565px;width:1px;height:1px;background:#808080;"></div>
<div style="left:753px;top:567px;width:1px;height:1px;background:#808080;"></div>
<div style="left:753px;top:569px;width:1px;height:1px;background:#808080;"></div>
<div style="left:753px;top:571px;width:1px;height:1px;background:#808080;"></div>
<div style="left:753px;top:573px;width:1px;height:1px;background:#808080;"></div>
<div style="left:753px;top:575px;width:1px;height:1px;background:#808080;"></div>
<div style="left:753px;top:577px;width:1px;height:1px;background:#808080;"></div>
<div style="left:753px;top:579px;width:1px;height:1px;background:#808080;"></div>
<div style="left:753px;top:581px;width:1px;height:1px;background:#808080;"></div>
<div style="left:753px;top:583px;width:1px;height:1px;background:#808080;"></div>
<div style="left:753px;top:585px;width:1px;height:1px;background:#808080;"></div>
<div style="left:753px;top:587px;width:1px;height:1px;background:#808080;"></div>
<div style="left:753px;top:589px;width:1px;height:1px;background:#808080;"></div>
<div style="left:753px;top:591px;width:1px;height:1px;background:#808080;"></div>
<div style="left:753px;top:593px;width:1px;height:1px;background:#808080;"></div>
<div style="left:753px;top:595px;width:1px;height:1px;background:#808080;"></div>
<div style="left:753px;top:597px;width:1px;height:1px;background:#808080;"></div>
<div style="left:753px;top:599px;width:1px;height:1px;background:#808080;"></div>
<div style="left:753px;top:601px;width:1px;height:1px;background:#808080;"></div>
<div style="left:753px;top:603px;width:1px;height:1px;background:#808080;"></div>
<div style="left:753px;top:605px;width:1px;height:1px;background:#808080;"></div>
<div style="left:753px;top:607px;width:1px;height:1px;background:#808080;"></div>
<div style="left:753px;top:609px;width:1px;height:1px;background:#808080;"></div>
<div style="left:753px;top:611px;width:1px;height:1px;background:#808080;"></div>
<div style="left:753px;top:613px;width:1px;height:1px;background:#808080;"></div>
<div style="left:753px;top:615px;width:1px;height:1px;background:#808080;"></div>
<div style="left:753px;top:617px;width:1px;height:1px;background:#808080;"></div>
<div style="left:753px;top:619px;width:1px;height:1px;background:#808080;"></div>
<div style="left:753px;top:621px;width:1px;height:1px;background:#808080;"></div>
<div style="left:753px;top:623px;width:1px;height:1px;background:#808080;"></div>
<div style="left:753px;top:625px;width:1px;height:1px;background:#808080;"></div>
<div style="left:753px;top:627px;width:1px;height:1px;background:#808080;"></div>
<div style="left:753px;top:629px;width:1px;height:1px;background:#808080;"></div>
<div style="left:753px;top:631px;width:1px;height:1px;background:#808080;"></div>
<div style="left:753px;top:633px;width:1px;height:1px;background:#808080;"></div>
<div style="left:753px;top:635px;width:1px;height:1px;background:#808080;"></div>
<div style="left:753px;top:637px;width:1px;height:1px;background:#808080;"></div>
<div style="left:753px;top:639px;width:1px;height:1px;background:#808080;"></div>
<div style="left:753px;top:641px;width:1px;height:1px;background:#808080;"></div>
<div style="left:753px;top:643px;width:1px;height:1px;background:#808080;"></div>
<div style="left:753px;top:645px;width:1px;height:1px;background:#808080;"></div>
<div style="left:753px;top:647px;width:1px;height:1px;background:#808080;"></div>
<div style="left:753px;top:649px;width:1px;height:1px;background:#808080;"></div>
<div style="left:753px;top:651px;width:1px;height:1px;background:#808080;"></div>
<div style="left:753px;top:653px;width:1px;height:1px;background:#808080;"></div>
<div style="left:753px;top:655px;width:1px;height:1px;background:#808080;"></div>
<div style="left:753px;top:657px;width:1px;height:1px;background:#808080;"></div>
<div style="left:753px;top:659px;width:1px;height:1px;background:#808080;"></div>
<div style="left:753px;top:661px;width:1px;height:1px;background:#808080;"></div>
<div style="left:753px;top:663px;width:1px;height:1px;background:#808080;"></div>
<div style="left:753px;top:665px;width:1px;height:1px;background:#808080;"></div>
<div style="left:753px;top:667px;width:1px;height:1px;background:#808080;"></div>
<div style="left:753px;top:669px;width:1px;height:1px;background:#808080;"></div>
<div style="left:753px;top:671px;width:1px;height:1px;background:#808080;"></div>
<div style="left:753px;top:673px;width:1px;height:1px;background:#808080;"></div>
<div style="left:753px;top:675px;width:1px;height:1px;background:#808080;"></div>
<div style="left:753px;top:677px;width:1px;height:1px;background:#808080;"></div>
<div style="left:753px;top:679px;width:1px;height:1px;background:#808080;"></div>
<div style="left:753px;top:681px;width:1px;height:1px;background:#808080;"></div>
<div style="left:753px;top:683px;width:1px;height:1px;background:#808080;"></div>
<div style="left:753px;top:685px;width:1px;height:1px;background:#808080;"></div>
<div style="left:753px;top:687px;width:1px;height:1px;background:#808080;"></div>
<div style="left:753px;top:689px;width:1px;height:1px;background:#808080;"></div>
<div style="left:753px;top:691px;width:1px;height:1px;background:#808080;"></div>
<div style="left:753px;top:693px;width:1px;height:1px;background:#808080;"></div>
<div style="left:753px;top:695px;width:1px;height:1px;background:#808080;"></div>
<div style="left:753px;top:697px;width:1px;height:1px;background:#808080;"></div>
<div style="left:753px;top:699px;width:1px;height:1px;background:#808080;"></div>
<div style="left:753px;top:701px;width:1px;height:1px;background:#808080;"></div>
<div style="left:753px;top:703px;width:1px;height:1px;background:#808080;"></div>
<div style="left:753px;top:705px;width:1px;height:1px;background:#808080;"></div>
<div style="left:753px;top:707px;width:1px;height:1px;background:#808080;"></div>
<div style="left:753px;top:709px;width:1px;height:1px;background:#808080;"></div>
<div style="left:753px;top:711px;width:1px;height:1px;background:#808080;"></div>
<div style="left:753px;top:713px;width:1px;height:1px;background:#808080;"></div>
<div style="left:753px;top:715px;width:1px;height:1px;background:#808080;"></div>
<div style="left:753px;top:717px;width:1px;height:1px;background:#808080;"></div>
<div style="left:753px;top:719px;width:1px;height:1px;background:#808080;"></div>
<div style="left:753px;top:721px;width:1px;height:1px;background:#808080;"></div>
<div style="left:753px;top:723px;width:1px;height:1px;background:#808080;"></div>
<div style="left:753px;top:725px;width:1px;height:1px;background:#808080;"></div>
<div style="left:753px;top:727px;width:1px;height:1px;background:#808080;"></div>
<div style="left:753px;top:729px;width:1px;height:1px;background:#808080;"></div>
<div style="left:753px;top:731px;width:1px;height:1px;background:#808080;"></div>
<div style="left:753px;top:733px;width:1px;height:1px;background:#808080;"></div>
<div style="left:753px;top:735px;width:1px;height:1px;background:#808080;"></div>
<div style="left:753px;top:737px;width:1px;height:1px;background:#808080;"></div>
<div style="left:753px;top:739px;width:1px;height:1px;background:#808080;"></div>
<div style="left:753px;top:741px;width:1px;height:1px;background:#808080;"></div>
<div style="left:753px;top:743px;width:1px;height:1px;background:#808080;"></div>
<div style="left:753px;top:745px;width:1px;height:1px;background:#808080;"></div>
<div style="left:753px;top:747px;width:1px;height:1px;background:#808080;"></div>
<div style="left:753px;top:749px;width:1px;height:1px;background:#808080;"></div>
<div style="left:753px;top:751px;width:1px;height:1px;background:#808080;"></div>
<div style="left:753px;top:753px;width:1px;height:1px;background:#808080;"></div>
<div style="left:753px;top:755px;width:1px;height:1px;background:#808080;"></div>
<div style="left:753px;top:757px;width:1px;height:1px;background:#808080;"></div>
<div style="left:753px;top:759px;width:1px;height:1px;background:#808080;"></div>
<div style="left:753px;top:761px;width:1px;height:1px;background:#808080;"></div>
<div style="left:753px;top:763px;width:1px;height:1px;background:#808080;"></div>
<div style="left:753px;top:765px;width:1px;height:1px;background:#808080;"></div>
<div style="left:753px;top:767px;width:1px;height:1px;background:#808080;"></div>
<div style="left:753px;top:769px;width:1px;height:1px;background:#808080;"></div>
<div style="left:753px;top:771px;width:1px;height:1px;background:#808080;"></div>
<div style="left:753px;top:773px;width:1px;height:1px;background:#808080;"></div>
<div style="left:753px;top:775px;width:1px;height:1px;background:#808080;"></div>
<div style="left:753px;top:777px;width:1px;height:1px;background:#808080;"></div>
<div style="left:753px;top:779px;width:1px;height:1px;background:#808080;"></div>
<div style="left:753px;top:781px;width:1px;height:1px;background:#808080;"></div>
<div style="left:753px;top:783px;width:1px;height:1px;background:#808080;"></div>
<div style="left:753px;top:785px;width:1px;height:1px;background:#808080;"></div>
<div style="left:753px;top:787px;width:1px;height:1px;background:#808080;"></div>
<div style="left:753px;top:789px;width:1px;height:1px;background:#808080;"></div>
<div style="left:753px;top:791px;width:1px;height:1px;background:#808080;"></div>
<div style="left:753px;top:793px;width:1px;height:1px;background:#808080;"></div>
<div style="left:753px;top:795px;width:1px;height:1px;background:#808080;"></div>
<div style="left:753px;top:797px;width:1px;height:1px;background:#808080;"></div>
<div style="left:753px;top:799px;width:1px;height:1px;background:#808080;"></div>
<div style="left:753px;top:801px;width:1px;height:1px;background:#808080;"></div>
<div style="left:753px;top:803px;width:1px;height:1px;background:#808080;"></div>
<div style="left:753px;top:805px;width:1px;height:1px;background:#808080;"></div>
<div style="left:753px;top:807px;width:1px;height:1px;background:#808080;"></div>
<div style="left:773px;top:554px;width:1px;height:1px;background:#808080;"></div>
<div style="left:773px;top:556px;width:1px;height:1px;background:#808080;"></div>
<div style="left:773px;top:558px;width:1px;height:1px;background:#808080;"></div>
<div style="left:773px;top:560px;width:1px;height:1px;background:#808080;"></div>
<div style="left:773px;top:562px;width:1px;height:1px;background:#808080;"></div>
<div style="left:773px;top:564px;width:1px;height:1px;background:#808080;"></div>
<div style="left:773px;top:566px;width:1px;height:1px;background:#808080;"></div>
<div style="left:773px;top:568px;width:1px;height:1px;background:#808080;"></div>
<div style="left:773px;top:570px;width:1px;height:1px;background:#808080;"></div>
<div style="left:773px;top:572px;width:1px;height:1px;background:#808080;"></div>
<div style="left:773px;top:574px;width:1px;height:1px;background:#808080;"></div>
<div style="left:773px;top:576px;width:1px;height:1px;background:#808080;"></div>
<div style="left:773px;top:578px;width:1px;height:1px;background:#808080;"></div>
<div style="left:773px;top:580px;width:1px;height:1px;background:#808080;"></div>
<div style="left:773px;top:582px;width:1px;height:1px;background:#808080;"></div>
<div style="left:773px;top:584px;width:1px;height:1px;background:#808080;"></div>
<div style="left:773px;top:586px;width:1px;height:1px;background:#808080;"></div>
<div style="left:773px;top:588px;width:1px;height:1px;background:#808080;"></div>
<div style="left:773px;top:590px;width:1px;height:1px;background:#808080;"></div>
<div style="left:773px;top:592px;width:1px;height:1px;background:#808080;"></div>
<div style="left:773px;top:594px;width:1px;height:1px;background:#808080;"></div>
<div style="left:773px;top:596px;width:1px;height:1px;background:#808080;"></div>
<div style="left:773px;top:598px;width:1px;height:1px;background:#808080;"></div>
<div style="left:773px;top:600px;width:1px;height:1px;background:#808080;"></div>
<div style="left:773px;top:602px;width:1px;height:1px;background:#808080;"></div>
<div style="left:773px;top:604px;width:1px;height:1px;background:#808080;"></div>
<div style="left:773px;top:606px;width:1px;height:1px;background:#808080;"></div>
<div style="left:773px;top:608px;width:1px;height:1px;background:#808080;"></div>
<div style="left:773px;top:610px;width:1px;height:1px;background:#808080;"></div>
<div style="left:773px;top:612px;width:1px;height:1px;background:#808080;"></div>
<div style="left:773px;top:614px;width:1px;height:1px;background:#808080;"></div>
<div style="left:773px;top:616px;width:1px;height:1px;background:#808080;"></div>
<div style="left:773px;top:618px;width:1px;height:1px;background:#808080;"></div>
<div style="left:773px;top:620px;width:1px;height:1px;background:#808080;"></div>
<div style="left:773px;top:622px;width:1px;height:1px;background:#808080;"></div>
<div style="left:773px;top:624px;width:1px;height:1px;background:#808080;"></div>
<div style="left:773px;top:626px;width:1px;height:1px;background:#808080;"></div>
<div style="left:773px;top:628px;width:1px;height:1px;background:#808080;"></div>
<div style="left:773px;top:630px;width:1px;height:1px;background:#808080;"></div>
<div style="left:773px;top:632px;width:1px;height:1px;background:#808080;"></div>
<div style="left:773px;top:634px;width:1px;height:1px;background:#808080;"></div>
<div style="left:773px;top:636px;width:1px;height:1px;background:#808080;"></div>
<div style="left:773px;top:638px;width:1px;height:1px;background:#808080;"></div>
<div style="left:773px;top:640px;width:1px;height:1px;background:#808080;"></div>
<div style="left:773px;top:642px;width:1px;height:1px;background:#808080;"></div>
<div style="left:773px;top:644px;width:1px;height:1px;background:#808080;"></div>
<div style="left:773px;top:646px;width:1px;height:1px;background:#808080;"></div>
<div style="left:773px;top:648px;width:1px;height:1px;background:#808080;"></div>
<div style="left:773px;top:650px;width:1px;height:1px;background:#808080;"></div>
<div style="left:773px;top:652px;width:1px;height:1px;background:#808080;"></div>
<div style="left:773px;top:654px;width:1px;height:1px;background:#808080;"></div>
<div style="left:773px;top:656px;width:1px;height:1px;background:#808080;"></div>
<div style="left:773px;top:658px;width:1px;height:1px;background:#808080;"></div>
<div style="left:773px;top:660px;width:1px;height:1px;background:#808080;"></div>
<div style="left:773px;top:662px;width:1px;height:1px;background:#808080;"></div>
<div style="left:773px;top:664px;width:1px;height:1px;background:#808080;"></div>
<div style="left:773px;top:666px;width:1px;height:1px;background:#808080;"></div>
<div style="left:773px;top:668px;width:1px;height:1px;background:#808080;"></div>
<div style="left:773px;top:670px;width:1px;height:1px;background:#808080;"></div>
<div style="left:773px;top:672px;width:1px;height:1px;background:#808080;"></div>
<div style="left:773px;top:674px;width:1px;height:1px;background:#808080;"></div>
<div style="left:773px;top:676px;width:1px;height:1px;background:#808080;"></div>
<div style="left:773px;top:678px;width:1px;height:1px;background:#808080;"></div>
<div style="left:773px;top:680px;width:1px;height:1px;background:#808080;"></div>
<div style="left:773px;top:682px;width:1px;height:1px;background:#808080;"></div>
<div style="left:773px;top:684px;width:1px;height:1px;background:#808080;"></div>
<div style="left:773px;top:686px;width:1px;height:1px;background:#808080;"></div>
<div style="left:773px;top:688px;width:1px;height:1px;background:#808080;"></div>
<div style="left:773px;top:690px;width:1px;height:1px;background:#808080;"></div>
<div style="left:773px;top:692px;width:1px;height:1px;background:#808080;"></div>
<div style="left:773px;top:694px;width:1px;height:1px;background:#808080;"></div>
<div style="left:773px;top:696px;width:1px;height:1px;background:#808080;"></div>
<div style="left:773px;top:698px;width:1px;height:1px;background:#808080;"></div>
<div style="left:773px;top:700px;width:1px;height:1px;background:#808080;"></div>
<div style="left:773px;top:702px;width:1px;height:1px;background:#808080;"></div>
<div style="left:773px;top:704px;width:1px;height:1px;background:#808080;"></div>
<div style="left:773px;top:706px;width:1px;height:1px;background:#808080;"></div>
<div style="left:773px;top:708px;width:1px;height:1px;background:#808080;"></div>
<div style="left:773px;top:710px;width:1px;height:1px;background:#808080;"></div>
<div style="left:773px;top:712px;width:1px;height:1px;background:#808080;"></div>
<div style="left:773px;top:714px;width:1px;height:1px;background:#808080;"></div>
<div style="left:773px;top:716px;width:1px;height:1px;background:#808080;"></div>
<div style="left:773px;top:718px;width:1px;height:1px;background:#808080;"></div>
<div style="left:773px;top:720px;width:1px;height:1px;background:#808080;"></div>
<div style="left:773px;top:722px;width:1px;height:1px;background:#808080;"></div>
<div style="left:773px;top:724px;width:1px;height:1px;background:#808080;"></div>
<div style="left:773px;top:726px;width:1px;height:1px;background:#808080;"></div>
<div style="left:773px;top:728px;width:1px;height:1px;background:#808080;"></div>
<div style="left:773px;top:730px;width:1px;height:1px;background:#808080;"></div>
<div style="left:773px;top:732px;width:1px;height:1px;background:#808080;"></div>
<div style="left:773px;top:734px;width:1px;height:1px;background:#808080;"></div>
<div style="left:773px;top:736px;width:1px;height:1px;background:#808080;"></div>
<div style="left:773px;top:738px;width:1px;height:1px;background:#808080;"></div>
<div style="left:773px;top:740px;width:1px;height:1px;background:#808080;"></div>
<div style="left:773px;top:742px;width:1px;height:1px;background:#808080;"></div>
<div style="left:773px;top:744px;width:1px;height:1px;background:#808080;"></div>
<div style="left:773px;top:746px;width:1px;height:1px;background:#808080;"></div>
<div style="left:773px;top:748px;width:1px;height:1px;background:#808080;"></div>
<div style="left:773px;top:750px;width:1px;height:1px;background:#808080;"></div>
<div style="left:773px;top:752px;width:1px;height:1px;background:#808080;"></div>
<div style="left:773px;top:754px;width:1px;height:1px;background:#808080;"></div>
<div style="left:773px;top:756px;width:1px;height:1px;background:#808080;"></div>
<div style="left:773px;top:758px;width:1px;height:1px;background:#808080;"></div>
<div style="left:773px;top:760px;width:1px;height:1px;background:#808080;"></div>
<div style="left:773px;top:762px;width:1px;height:1px;background:#808080;"></div>
<div style="left:773px;top:764px;width:1px;height:1px;background:#808080;"></div>
<div style="left:773px;top:766px;width:1px;height:1px;background:#808080;"></div>
<div style="left:773px;top:768px;width:1px;height:1px;background:#808080;"></div>
<div style="left:773px;top:770px;width:1px;height:1px;background:#808080;"></div>
<div style="left:773px;top:772px;width:1px;height:1px;background:#808080;"></div>
<div style="left:773px;top:774px;width:1px;height:1px;background:#808080;"></div>
<div style="left:773px;top:776px;width:1px;height:1px;background:#808080;"></div>
<div style="left:773px;top:778px;width:1px;height:1px;background:#808080;"></div>
<div style="left:773px;top:780px;width:1px;height:1px;background:#808080;"></div>
<div style="left:773px;top:782px;width:1px;height:1px;background:#808080;"></div>
<div style="left:773px;top:784px;width:1px;height:1px;background:#808080;"></div>
<div style="left:773px;top:786px;width:1px;height:1px;background:#808080;"></div>
<div style="left:773px;top:788px;width:1px;height:1px;background:#808080;"></div>
<div style="left:773px;top:790px;width:1px;height:1px;background:#808080;"></div>
<div style="left:773px;top:792px;width:1px;height:1px;background:#808080;"></div>
<div style="left:773px;top:794px;width:1px;height:1px;background:#808080;"></div>
<div style="left:793px;top:580px;width:1px;height:1px;background:#808080;"></div>
<div style="left:793px;top:582px;width:1px;height:1px;background:#808080;"></div>
<div style="left:793px;top:584px;width:1px;height:1px;background:#808080;"></div>
<div style="left:793px;top:586px;width:1px;height:1px;background:#808080;"></div>
<div style="left:793px;top:588px;width:1px;height:1px;background:#808080;"></div>
<div style="left:793px;top:590px;width:1px;height:1px;background:#808080;"></div>
<div style="left:793px;top:592px;width:1px;height:1px;background:#808080;"></div>
<div style="left:793px;top:594px;width:1px;height:1px;background:#808080;"></div>
<div style="left:793px;top:596px;width:1px;height:1px;background:#808080;"></div>
<div style="left:793px;top:598px;width:1px;height:1px;background:#808080;"></div>
<div style="left:793px;top:600px;width:1px;height:1px;background:#808080;"></div>
<div style="left:793px;top:602px;width:1px;height:1px;background:#808080;"></div>
<div style="left:793px;top:604px;width:1px;height:1px;background:#808080;"></div>
<div style="left:793px;top:606px;width:1px;height:1px;background:#808080;"></div>
<div style="left:793px;top:608px;width:1px;height:1px;background:#808080;"></div>
<div style="left:793px;top:610px;width:1px;height:1px;background:#808080;"></div>
<div style="left:793px;top:612px;width:1px;height:1px;background:#808080;"></div>
<div style="left:793px;top:614px;width:1px;height:1px;background:#808080;"></div>
<div style="left:793px;top:616px;width:1px;height:1px;background:#808080;"></div>
<div style="left:793px;top:618px;width:1px;height:1px;background:#808080;"></div>
<div style="left:793px;top:620px;width:1px;height:1px;background:#808080;"></div>
<div style="left:793px;top:622px;width:1px;height:1px;background:#808080;"></div>
<div style="left:793px;top:624px;width:1px;height:1px;background:#808080;"></div>
<div style="left:793px;top:626px;width:1px;height:1px;background:#808080;"></div>
<div style="left:793px;top:628px;width:1px;height:1px;background:#808080;"></div>
<div style="left:793px;top:630px;width:1px;height:1px;background:#808080;"></div>
<div style="left:793px;top:632px;width:1px;height:1px;background:#808080;"></div>
<div style="left:793px;top:634px;width:1px;height:1px;background:#808080;"></div>
<div style="left:793px;top:636px;width:1px;height:1px;background:#808080;"></div>
<div style="left:793px;top:638px;width:1px;height:1px;background:#808080;"></div>
<div style="left:793px;top:640px;width:1px;height:1px;background:#808080;"></div>
<div style="left:793px;top:642px;width:1px;height:1px;background:#808080;"></div>
<div style="left:793px;top:644px;width:1px;height:1px;background:#808080;"></div>
<div style="left:793px;top:646px;width:1px;height:1px;background:#808080;"></div>
<div style="left:793px;top:648px;width:1px;height:1px;background:#808080;"></div>
<div style="left:793px;top:650px;width:1px;height:1px;background:#808080;"></div>
<div style="left:793px;top:652px;width:1px;height:1px;background:#808080;"></div>
<div style="left:793px;top:654px;width:1px;height:1px;background:#808080;"></div>
<div style="left:793px;top:656px;width:1px;height:1px;background:#808080;"></div>
<div style="left:793px;top:658px;width:1px;height:1px;background:#808080;"></div>
<div style="left:793px;top:660px;width:1px;height:1px;background:#808080;"></div>
<div style="left:793px;top:662px;width:1px;height:1px;background:#808080;"></div>
<div style="left:793px;top:664px;width:1px;height:1px;background:#808080;"></div>
<div style="left:793px;top:666px;width:1px;height:1px;background:#808080;"></div>
<div style="left:793px;top:668px;width:1px;height:1px;background:#808080;"></div>
<div style="left:793px;top:670px;width:1px;height:1px;background:#808080;"></div>
<div style="left:793px;top:672px;width:1px;height:1px;background:#808080;"></div>
<div style="left:793px;top:674px;width:1px;height:1px;background:#808080;"></div>
<div style="left:793px;top:676px;width:1px;height:1px;background:#808080;"></div>
<div style="left:793px;top:678px;width:1px;height:1px;background:#808080;"></div>
<div style="left:793px;top:680px;width:1px;height:1px;background:#808080;"></div>
<div style="left:793px;top:682px;width:1px;height:1px;background:#808080;"></div>
<div style="left:793px;top:684px;width:1px;height:1px;background:#808080;"></div>
<div style="left:793px;top:686px;width:1px;height:1px;background:#808080;"></div>
<div style="left:793px;top:688px;width:1px;height:1px;background:#808080;"></div>
<div style="left:793px;top:690px;width:1px;height:1px;background:#808080;"></div>
<div style="left:793px;top:692px;width:1px;height:1px;background:#808080;"></div>
<div style="left:793px;top:694px;width:1px;height:1px;background:#808080;"></div>
<div style="left:793px;top:696px;width:1px;height:1px;background:#808080;"></div>
<div style="left:793px;top:698px;width:1px;height:1px;background:#808080;"></div>
<div style="left:793px;top:700px;width:1px;height:1px;background:#808080;"></div>
<div style="left:793px;top:702px;width:1px;height:1px;background:#808080;"></div>
<div style="left:793px;top:704px;width:1px;height:1px;background:#808080;"></div>
<div style="left:793px;top:706px;width:1px;height:1px;background:#808080;"></div>
<div style="left:793px;top:708px;width:1px;height:1px;background:#808080;"></div>
<div style="left:793px;top:710px;width:1px;height:1px;background:#808080;"></div>
<div style="left:793px;top:712px;width:1px;height:1px;background:#808080;"></div>
<div style="left:793px;top:714px;width:1px;height:1px;background:#808080;"></div>
<div style="left:793px;top:716px;width:1px;height:1px;background:#808080;"></div>
<div style="left:793px;top:718px;width:1px;height:1px;background:#808080;"></div>
<div style="left:793px;top:720px;width:1px;height:1px;background:#808080;"></div>
<div style="left:793px;top:722px;width:1px;height:1px;background:#808080;"></div>
<div style="left:793px;top:724px;width:1px;height:1px;background:#808080;"></div>
<div style="left:793px;top:726px;width:1px;height:1px;background:#808080;"></div>
<div style="left:793px;top:728px;width:1px;height:1px;background:#808080;"></div>
<div style="left:793px;top:749px;width:1px;height:1px;background:#808080;"></div>
<div style="left:793px;top:751px;width:1px;height:1px;background:#808080;"></div>
<div style="left:793px;top:753px;width:1px;height:1px;background:#808080;"></div>
<div style="left:793px;top:755px;width:1px;height:1px;background:#808080;"></div>
<div style="left:813px;top:762px;width:1px;height:1px;background:#808080;"></div>
<div style="left:813px;top:764px;width:1px;height:1px;background:#808080;"></div>
<div style="left:813px;top:766px;width:1px;height:1px;background:#808080;"></div>
<div style="left:813px;top:768px;width:1px;height:1px;background:#808080;"></div>
<div style="left:733px;top:529px;width:1px;height:1px;background:#808080;"></div>
<div style="left:735px;top:534px;width:1px;height:1px;background:#808080;"></div>
<div style="left:737px;top:534px;width:1px;height:1px;background:#808080;"></div>
<div style="left:739px;top:534px;width:1px;height:1px;background:#808080;"></div>
<div style="left:741px;top:534px;width:1px;height:1px;background:#808080;"></div>
<div style="left:729px;top:530px;width:9px;height:9px;background:#ffffff;border:1px solid #808080;box-sizing:border-box;"></div>
<div style="left:731px;top:534px;width:5px;height:1px;background:#000;"></div>
<div class="t" style="left:761px;top:529px;letter-spacing:0.333px;">Data</div>
<div style="left:755px;top:547px;width:1px;height:1px;background:#808080;"></div>
<div style="left:757px;top:547px;width:1px;height:1px;background:#808080;"></div>
<div style="left:759px;top:547px;width:1px;height:1px;background:#808080;"></div>
<div style="left:761px;top:547px;width:1px;height:1px;background:#808080;"></div>
<div style="left:749px;top:543px;width:9px;height:9px;background:#ffffff;border:1px solid #808080;box-sizing:border-box;"></div>
<div style="left:751px;top:547px;width:5px;height:1px;background:#000;"></div>
<div class="t" style="left:765px;top:542px;letter-spacing:-0.036px;">FibreChannel</div>
<div style="left:775px;top:560px;width:1px;height:1px;background:#808080;"></div>
<div style="left:777px;top:560px;width:1px;height:1px;background:#808080;"></div>
<div style="left:779px;top:560px;width:1px;height:1px;background:#808080;"></div>
<div style="left:781px;top:560px;width:1px;height:1px;background:#808080;"></div>
<div class="t" style="left:785px;top:555px;letter-spacing:-0.095px;">SoF: SOFi3 - 0xBCB55656 (3,166,000,726)</div>
<div style="left:775px;top:573px;width:1px;height:1px;background:#808080;"></div>
<div style="left:777px;top:573px;width:1px;height:1px;background:#808080;"></div>
<div style="left:779px;top:573px;width:1px;height:1px;background:#808080;"></div>
<div style="left:781px;top:573px;width:1px;height:1px;background:#808080;"></div>
<div style="left:769px;top:569px;width:9px;height:9px;background:#ffffff;border:1px solid #808080;box-sizing:border-box;"></div>
<div style="left:771px;top:573px;width:5px;height:1px;background:#000;"></div>
<div class="t" style="left:785px;top:568px;letter-spacing:-0.127px;">Frame_Header</div>
<div style="left:795px;top:586px;width:1px;height:1px;background:#808080;"></div>
<div style="left:797px;top:586px;width:1px;height:1px;background:#808080;"></div>
<div style="left:799px;top:586px;width:1px;height:1px;background:#808080;"></div>
<div style="left:801px;top:586px;width:1px;height:1px;background:#808080;"></div>
<div style="left:789px;top:582px;width:9px;height:9px;background:#ffffff;border:1px solid #808080;box-sizing:border-box;"></div>
<div style="left:791px;top:586px;width:5px;height:1px;background:#000;"></div>
<div style="left:793px;top:584px;width:1px;height:5px;background:#000;"></div>
<div class="t" style="left:805px;top:581px;letter-spacing:-0.152px;">R_CTL: FC_4 Device Data Unsolicited Data - 0x04 (4)</div>
<div style="left:795px;top:599px;width:1px;height:1px;background:#808080;"></div>
<div style="left:797px;top:599px;width:1px;height:1px;background:#808080;"></div>
<div style="left:799px;top:599px;width:1px;height:1px;background:#808080;"></div>
<div style="left:801px;top:599px;width:1px;height:1px;background:#808080;"></div>
<div class="t" style="left:805px;top:594px;letter-spacing:0.078px;">D_ID: 0x000012 (18)</div>
<div style="left:795px;top:612px;width:1px;height:1px;background:#808080;"></div>
<div style="left:797px;top:612px;width:1px;height:1px;background:#808080;"></div>
<div style="left:799px;top:612px;width:1px;height:1px;background:#808080;"></div>
<div style="left:801px;top:612px;width:1px;height:1px;background:#808080;"></div>
<div class="t" style="left:805px;top:607px;letter-spacing:-0.133px;">CS_CTL: 0x00 (0)</div>
<div style="left:795px;top:625px;width:1px;height:1px;background:#808080;"></div>
<div style="left:797px;top:625px;width:1px;height:1px;background:#808080;"></div>
<div style="left:799px;top:625px;width:1px;height:1px;background:#808080;"></div>
<div style="left:801px;top:625px;width:1px;height:1px;background:#808080;"></div>
<div class="t" style="left:805px;top:620px;letter-spacing:0.078px;">S_ID: 0x000022 (34)</div>
<div style="left:795px;top:638px;width:1px;height:1px;background:#808080;"></div>
<div style="left:797px;top:638px;width:1px;height:1px;background:#808080;"></div>
<div style="left:799px;top:638px;width:1px;height:1px;background:#808080;"></div>
<div style="left:801px;top:638px;width:1px;height:1px;background:#808080;"></div>
<div class="t" style="left:805px;top:633px;letter-spacing:-0.200px;">TYPE: ASM - 0x49 (73)</div>
<div style="left:795px;top:651px;width:1px;height:1px;background:#808080;"></div>
<div style="left:797px;top:651px;width:1px;height:1px;background:#808080;"></div>
<div style="left:799px;top:651px;width:1px;height:1px;background:#808080;"></div>
<div style="left:801px;top:651px;width:1px;height:1px;background:#808080;"></div>
<div style="left:789px;top:647px;width:9px;height:9px;background:#ffffff;border:1px solid #808080;box-sizing:border-box;"></div>
<div style="left:791px;top:651px;width:5px;height:1px;background:#000;"></div>
<div style="left:793px;top:649px;width:1px;height:5px;background:#000;"></div>
<div class="t" style="left:805px;top:646px;letter-spacing:0.031px;">F_CTL: 0x380000 (3,670,016)</div>
<div style="left:795px;top:664px;width:1px;height:1px;background:#808080;"></div>
<div style="left:797px;top:664px;width:1px;height:1px;background:#808080;"></div>
<div style="left:799px;top:664px;width:1px;height:1px;background:#808080;"></div>
<div style="left:801px;top:664px;width:1px;height:1px;background:#808080;"></div>
<div class="t" style="left:805px;top:659px;letter-spacing:-0.050px;">SEQ_ID: 0x46 (70)</div>
<div style="left:795px;top:677px;width:1px;height:1px;background:#808080;"></div>
<div style="left:797px;top:677px;width:1px;height:1px;background:#808080;"></div>
<div style="left:799px;top:677px;width:1px;height:1px;background:#808080;"></div>
<div style="left:801px;top:677px;width:1px;height:1px;background:#808080;"></div>
<div style="left:789px;top:673px;width:9px;height:9px;background:#ffffff;border:1px solid #808080;box-sizing:border-box;"></div>
<div style="left:791px;top:677px;width:5px;height:1px;background:#000;"></div>
<div style="left:793px;top:675px;width:1px;height:5px;background:#000;"></div>
<div class="t" style="left:805px;top:672px;letter-spacing:-0.067px;">DF_CTL: 0x00 (0)</div>
<div style="left:795px;top:690px;width:1px;height:1px;background:#808080;"></div>
<div style="left:797px;top:690px;width:1px;height:1px;background:#808080;"></div>
<div style="left:799px;top:690px;width:1px;height:1px;background:#808080;"></div>
<div style="left:801px;top:690px;width:1px;height:1px;background:#808080;"></div>
<div class="t" style="left:805px;top:685px;letter-spacing:-0.144px;">SEQ_CNT: 0x0000 (0)</div>
<div style="left:795px;top:703px;width:1px;height:1px;background:#808080;"></div>
<div style="left:797px;top:703px;width:1px;height:1px;background:#808080;"></div>
<div style="left:799px;top:703px;width:1px;height:1px;background:#808080;"></div>
<div style="left:801px;top:703px;width:1px;height:1px;background:#808080;"></div>
<div class="t" style="left:805px;top:698px;letter-spacing:-0.033px;">OX_ID: 0x03B1 (945)</div>
<div style="left:795px;top:716px;width:1px;height:1px;background:#808080;"></div>
<div style="left:797px;top:716px;width:1px;height:1px;background:#808080;"></div>
<div style="left:799px;top:716px;width:1px;height:1px;background:#808080;"></div>
<div style="left:801px;top:716px;width:1px;height:1px;background:#808080;"></div>
<div class="t" style="left:805px;top:711px;letter-spacing:-0.121px;">RX_ID: Unassigned - 0xFFFF (65,535)</div>
<div style="left:795px;top:729px;width:1px;height:1px;background:#808080;"></div>
<div style="left:797px;top:729px;width:1px;height:1px;background:#808080;"></div>
<div style="left:799px;top:729px;width:1px;height:1px;background:#808080;"></div>
<div style="left:801px;top:729px;width:1px;height:1px;background:#808080;"></div>
<div class="t" style="left:805px;top:724px;letter-spacing:0.050px;">Parameter: 0x00000000 (0)</div>
<div style="left:775px;top:742px;width:1px;height:1px;background:#808080;"></div>
<div style="left:777px;top:742px;width:1px;height:1px;background:#808080;"></div>
<div style="left:779px;top:742px;width:1px;height:1px;background:#808080;"></div>
<div style="left:781px;top:742px;width:1px;height:1px;background:#808080;"></div>
<div style="left:769px;top:738px;width:9px;height:9px;background:#ffffff;border:1px solid #808080;box-sizing:border-box;"></div>
<div style="left:771px;top:742px;width:5px;height:1px;background:#000;"></div>
<div class="t" style="left:785px;top:737px;letter-spacing:-0.089px;">Data_Field</div>
<div style="left:795px;top:755px;width:1px;height:1px;background:#808080;"></div>
<div style="left:797px;top:755px;width:1px;height:1px;background:#808080;"></div>
<div style="left:799px;top:755px;width:1px;height:1px;background:#808080;"></div>
<div style="left:801px;top:755px;width:1px;height:1px;background:#808080;"></div>
<div style="left:789px;top:751px;width:9px;height:9px;background:#ffffff;border:1px solid #808080;box-sizing:border-box;"></div>
<div style="left:791px;top:755px;width:5px;height:1px;background:#000;"></div>
<div class="t" style="left:805px;top:750px;letter-spacing:-0.100px;">ASM</div>
<div style="left:815px;top:768px;width:1px;height:1px;background:#808080;"></div>
<div style="left:817px;top:768px;width:1px;height:1px;background:#808080;"></div>
<div style="left:819px;top:768px;width:1px;height:1px;background:#808080;"></div>
<div style="left:821px;top:768px;width:1px;height:1px;background:#808080;"></div>
<div style="left:823px;top:763px;width:149px;height:13px;background:#0a246a;outline:1px dotted #fff;outline-offset:-1px;"></div>
<div class="t" style="left:825px;top:763px;color:#fff;letter-spacing:-0.030px;">MessageID: 0x00000012 (18)</div>
<div style="left:775px;top:781px;width:1px;height:1px;background:#808080;"></div>
<div style="left:777px;top:781px;width:1px;height:1px;background:#808080;"></div>
<div style="left:779px;top:781px;width:1px;height:1px;background:#808080;"></div>
<div style="left:781px;top:781px;width:1px;height:1px;background:#808080;"></div>
<div class="t" style="left:785px;top:776px;letter-spacing:-0.053px;">CRC: 0xC8FD3C03 (3,372,039,171)</div>
<div style="left:775px;top:794px;width:1px;height:1px;background:#808080;"></div>
<div style="left:777px;top:794px;width:1px;height:1px;background:#808080;"></div>
<div style="left:779px;top:794px;width:1px;height:1px;background:#808080;"></div>
<div style="left:781px;top:794px;width:1px;height:1px;background:#808080;"></div>
<div class="t" style="left:785px;top:789px;letter-spacing:-0.024px;">EoF: EOFt - 0xBC957575 (3,163,911,541)</div>
<div style="left:755px;top:807px;width:1px;height:1px;background:#808080;"></div>
<div style="left:757px;top:807px;width:1px;height:1px;background:#808080;"></div>
<div style="left:759px;top:807px;width:1px;height:1px;background:#808080;"></div>
<div style="left:761px;top:807px;width:1px;height:1px;background:#808080;"></div>
<div class="t" style="left:765px;top:802px;letter-spacing:-0.127px;">Payload Data</div>
<div style="left:747px;top:530px;width:9px;height:9px;background:#7a0000;border:1px solid #500000;box-sizing:border-box;"></div>
<svg style="left:1302px;top:838px" width="13" height="13" viewBox="0 0 13 13"><path d="M12.5 0.5 L0.5 12.5 M12.5 4.5 L4.5 12.5 M12.5 8.5 L8.5 12.5" stroke="#fff" stroke-width="1.2"/><path d="M13 1.5 L1.5 13 M13 5.5 L5.5 13 M13 9.5 L9.5 13" stroke="#707070" stroke-width="1.4"/></svg>
</body></html>
